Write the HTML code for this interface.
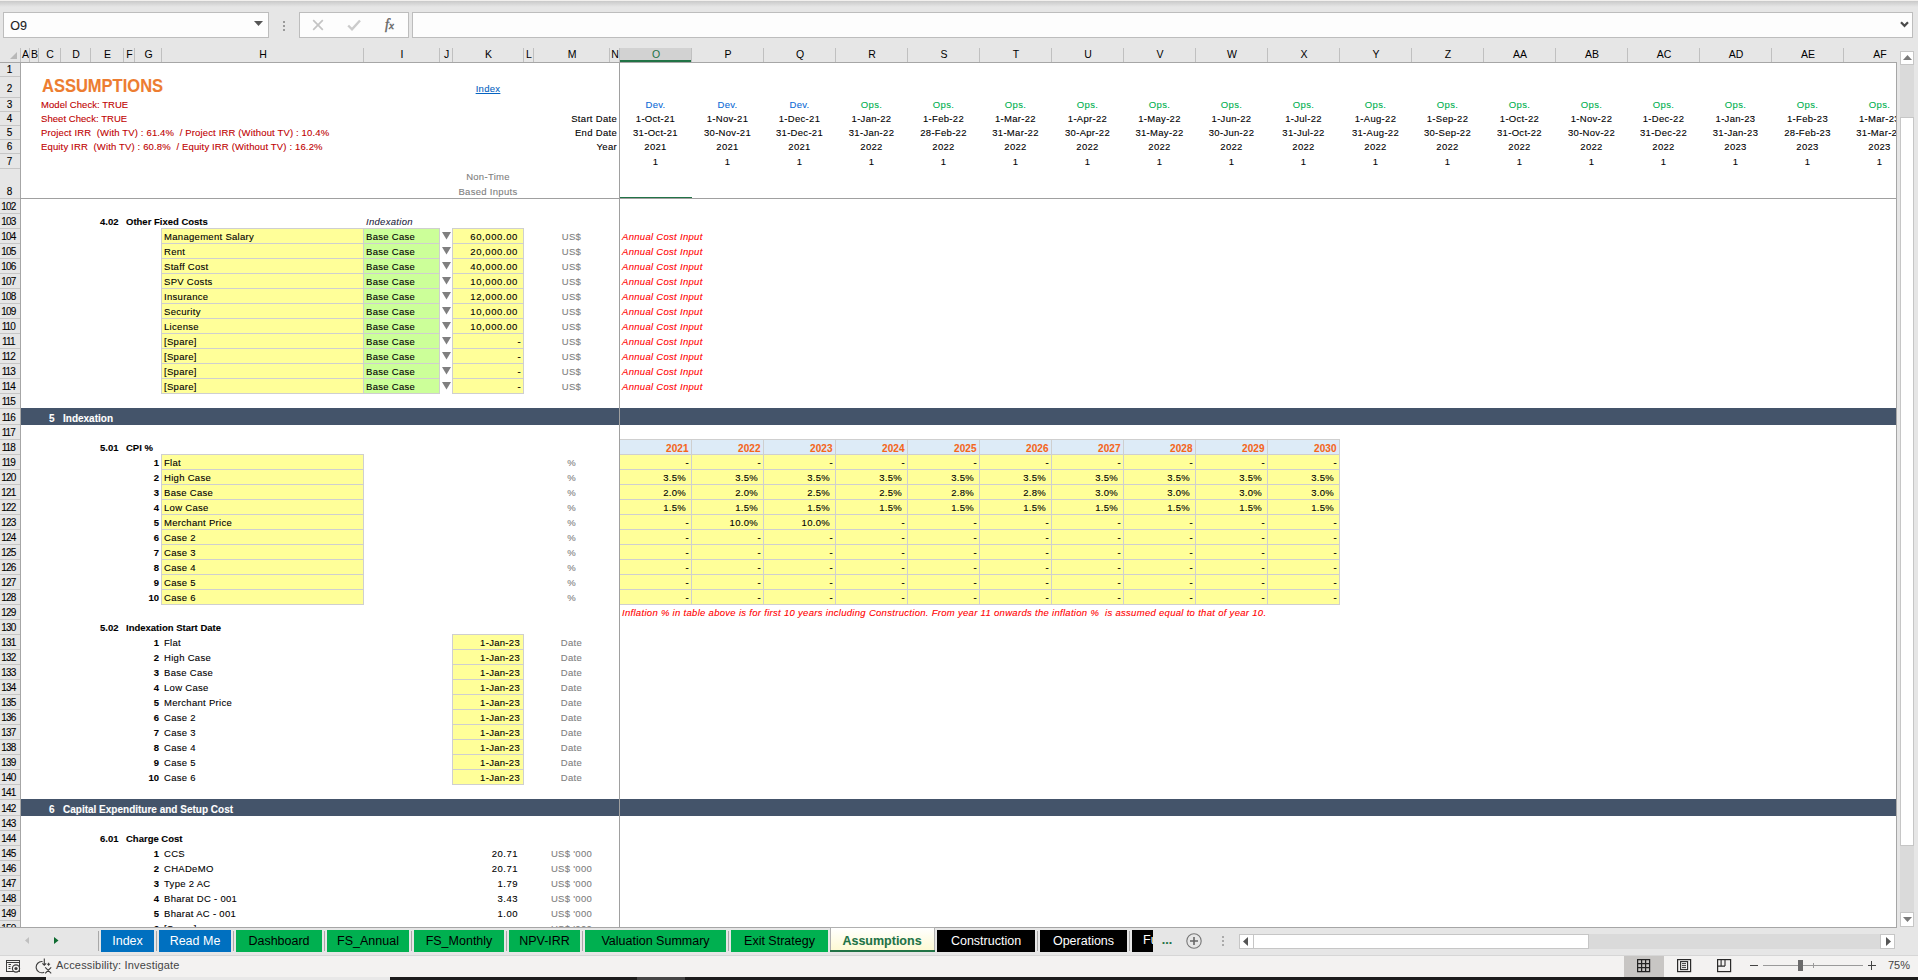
<!DOCTYPE html><html><head><meta charset="utf-8"><style>
html,body{margin:0;padding:0;}
body{width:1918px;height:980px;position:relative;overflow:hidden;background:#e6e6e6;font-family:"Liberation Sans", sans-serif;}
div{position:absolute;box-sizing:border-box;}
.t{white-space:pre;-webkit-text-stroke:0.1px currentColor;}
</style></head><body>
<div style="left:0px;top:0px;width:1918px;height:1px;background:#f2f0ee;"></div>
<div style="left:0;top:1px;width:1918px;height:6px;background:linear-gradient(#c9c9c9,#e6e6e6);"></div>
<div style="left:3px;top:12px;width:266px;height:26px;background:#fdfdfd;border:1px solid #bdbdbd;"></div>
<div class="t" style="top:18.69px;font-size:12.5px;line-height:14.36px;color:#222;font-weight:normal;left:10.3px;">O9</div>
<svg style="position:absolute;left:254px;top:21px" width="9" height="6"><path d="M0 0H9L4.5 5Z" fill="#555"/></svg>
<div style="left:283px;top:21px;width:2px;height:2px;background:#9a9a9a;"></div>
<div style="left:283px;top:25px;width:2px;height:2px;background:#9a9a9a;"></div>
<div style="left:283px;top:29px;width:2px;height:2px;background:#9a9a9a;"></div>
<div style="left:299px;top:12px;width:110px;height:26px;background:#fdfdfd;border:1px solid #bdbdbd;"></div>
<svg style="position:absolute;left:312px;top:19px" width="12" height="12"><path d="M1.2 1.2L10.8 10.8M10.8 1.2L1.2 10.8" stroke="#c4c4c4" stroke-width="1.7"/></svg>
<svg style="position:absolute;left:347px;top:19px" width="14" height="12"><path d="M1.2 6.5L5 10.3L13 1.5" stroke="#cbcbcb" stroke-width="2.4" fill="none"/></svg>
<div class="t" style="left:385px;top:17px;font-family:'Liberation Serif',serif;font-style:italic;font-weight:normal;font-size:14px;line-height:16px;color:#666;-webkit-text-stroke:0.4px #666;">f<span style="font-size:11px">x</span></div>
<div style="left:412px;top:12px;width:1501px;height:26px;background:#fdfdfd;border:1px solid #bdbdbd;"></div>
<svg style="position:absolute;left:1900px;top:21px" width="9" height="7"><path d="M1 1.2L4.5 4.8L8 1.2" stroke="#4a4a4a" stroke-width="2.2" fill="none"/></svg>
<div style="left:0px;top:48px;width:1918px;height:15px;background:#e6e6e6;"></div>
<div style="left:619px;top:48px;width:72px;height:14px;background:#d2d2d2;"></div>
<div style="left:619px;top:60px;width:72px;height:2px;background:#217346;"></div>
<div style="left:20px;top:48px;width:1px;height:14px;background:#c0c0c0;"></div>
<div class="t" style="top:48.30px;font-size:10.5px;line-height:12.06px;color:#000;font-weight:normal;left:-274.5px;width:600px;text-align:center;-webkit-text-stroke:0;">A</div>
<div style="left:29px;top:48px;width:1px;height:14px;background:#c0c0c0;"></div>
<div class="t" style="top:48.30px;font-size:10.5px;line-height:12.06px;color:#000;font-weight:normal;left:-265.5px;width:600px;text-align:center;-webkit-text-stroke:0;">B</div>
<div style="left:38px;top:48px;width:1px;height:14px;background:#c0c0c0;"></div>
<div class="t" style="top:48.30px;font-size:10.5px;line-height:12.06px;color:#000;font-weight:normal;left:-250.0px;width:600px;text-align:center;-webkit-text-stroke:0;">C</div>
<div style="left:60px;top:48px;width:1px;height:14px;background:#c0c0c0;"></div>
<div class="t" style="top:48.30px;font-size:10.5px;line-height:12.06px;color:#000;font-weight:normal;left:-224.0px;width:600px;text-align:center;-webkit-text-stroke:0;">D</div>
<div style="left:90px;top:48px;width:1px;height:14px;background:#c0c0c0;"></div>
<div class="t" style="top:48.30px;font-size:10.5px;line-height:12.06px;color:#000;font-weight:normal;left:-192.5px;width:600px;text-align:center;-webkit-text-stroke:0;">E</div>
<div style="left:123px;top:48px;width:1px;height:14px;background:#c0c0c0;"></div>
<div class="t" style="top:48.30px;font-size:10.5px;line-height:12.06px;color:#000;font-weight:normal;left:-170.5px;width:600px;text-align:center;-webkit-text-stroke:0;">F</div>
<div style="left:134px;top:48px;width:1px;height:14px;background:#c0c0c0;"></div>
<div class="t" style="top:48.30px;font-size:10.5px;line-height:12.06px;color:#000;font-weight:normal;left:-151.5px;width:600px;text-align:center;-webkit-text-stroke:0;">G</div>
<div style="left:161px;top:48px;width:1px;height:14px;background:#c0c0c0;"></div>
<div class="t" style="top:48.30px;font-size:10.5px;line-height:12.06px;color:#000;font-weight:normal;left:-37.0px;width:600px;text-align:center;-webkit-text-stroke:0;">H</div>
<div style="left:363px;top:48px;width:1px;height:14px;background:#c0c0c0;"></div>
<div class="t" style="top:48.30px;font-size:10.5px;line-height:12.06px;color:#000;font-weight:normal;left:102.0px;width:600px;text-align:center;-webkit-text-stroke:0;">I</div>
<div style="left:439px;top:48px;width:1px;height:14px;background:#c0c0c0;"></div>
<div class="t" style="top:48.30px;font-size:10.5px;line-height:12.06px;color:#000;font-weight:normal;left:146.5px;width:600px;text-align:center;-webkit-text-stroke:0;">J</div>
<div style="left:452px;top:48px;width:1px;height:14px;background:#c0c0c0;"></div>
<div class="t" style="top:48.30px;font-size:10.5px;line-height:12.06px;color:#000;font-weight:normal;left:188.5px;width:600px;text-align:center;-webkit-text-stroke:0;">K</div>
<div style="left:523px;top:48px;width:1px;height:14px;background:#c0c0c0;"></div>
<div class="t" style="top:48.30px;font-size:10.5px;line-height:12.06px;color:#000;font-weight:normal;left:229.0px;width:600px;text-align:center;-webkit-text-stroke:0;">L</div>
<div style="left:533px;top:48px;width:1px;height:14px;background:#c0c0c0;"></div>
<div class="t" style="top:48.30px;font-size:10.5px;line-height:12.06px;color:#000;font-weight:normal;left:272.0px;width:600px;text-align:center;-webkit-text-stroke:0;">M</div>
<div style="left:609px;top:48px;width:1px;height:14px;background:#c0c0c0;"></div>
<div class="t" style="top:48.30px;font-size:10.5px;line-height:12.06px;color:#000;font-weight:normal;left:315.0px;width:600px;text-align:center;-webkit-text-stroke:0;">N</div>
<div style="left:619px;top:48px;width:1px;height:14px;background:#c0c0c0;"></div>
<div class="t" style="top:48.30px;font-size:10.5px;line-height:12.06px;color:#217346;font-weight:normal;left:356.0px;width:600px;text-align:center;-webkit-text-stroke:0;">O</div>
<div style="left:691px;top:48px;width:1px;height:14px;background:#c0c0c0;"></div>
<div class="t" style="top:48.30px;font-size:10.5px;line-height:12.06px;color:#000;font-weight:normal;left:428.0px;width:600px;text-align:center;-webkit-text-stroke:0;">P</div>
<div style="left:763px;top:48px;width:1px;height:14px;background:#c0c0c0;"></div>
<div class="t" style="top:48.30px;font-size:10.5px;line-height:12.06px;color:#000;font-weight:normal;left:500.0px;width:600px;text-align:center;-webkit-text-stroke:0;">Q</div>
<div style="left:835px;top:48px;width:1px;height:14px;background:#c0c0c0;"></div>
<div class="t" style="top:48.30px;font-size:10.5px;line-height:12.06px;color:#000;font-weight:normal;left:572.0px;width:600px;text-align:center;-webkit-text-stroke:0;">R</div>
<div style="left:907px;top:48px;width:1px;height:14px;background:#c0c0c0;"></div>
<div class="t" style="top:48.30px;font-size:10.5px;line-height:12.06px;color:#000;font-weight:normal;left:644.0px;width:600px;text-align:center;-webkit-text-stroke:0;">S</div>
<div style="left:979px;top:48px;width:1px;height:14px;background:#c0c0c0;"></div>
<div class="t" style="top:48.30px;font-size:10.5px;line-height:12.06px;color:#000;font-weight:normal;left:716.0px;width:600px;text-align:center;-webkit-text-stroke:0;">T</div>
<div style="left:1051px;top:48px;width:1px;height:14px;background:#c0c0c0;"></div>
<div class="t" style="top:48.30px;font-size:10.5px;line-height:12.06px;color:#000;font-weight:normal;left:788.0px;width:600px;text-align:center;-webkit-text-stroke:0;">U</div>
<div style="left:1123px;top:48px;width:1px;height:14px;background:#c0c0c0;"></div>
<div class="t" style="top:48.30px;font-size:10.5px;line-height:12.06px;color:#000;font-weight:normal;left:860.0px;width:600px;text-align:center;-webkit-text-stroke:0;">V</div>
<div style="left:1195px;top:48px;width:1px;height:14px;background:#c0c0c0;"></div>
<div class="t" style="top:48.30px;font-size:10.5px;line-height:12.06px;color:#000;font-weight:normal;left:932.0px;width:600px;text-align:center;-webkit-text-stroke:0;">W</div>
<div style="left:1267px;top:48px;width:1px;height:14px;background:#c0c0c0;"></div>
<div class="t" style="top:48.30px;font-size:10.5px;line-height:12.06px;color:#000;font-weight:normal;left:1004.0px;width:600px;text-align:center;-webkit-text-stroke:0;">X</div>
<div style="left:1339px;top:48px;width:1px;height:14px;background:#c0c0c0;"></div>
<div class="t" style="top:48.30px;font-size:10.5px;line-height:12.06px;color:#000;font-weight:normal;left:1076.0px;width:600px;text-align:center;-webkit-text-stroke:0;">Y</div>
<div style="left:1411px;top:48px;width:1px;height:14px;background:#c0c0c0;"></div>
<div class="t" style="top:48.30px;font-size:10.5px;line-height:12.06px;color:#000;font-weight:normal;left:1148.0px;width:600px;text-align:center;-webkit-text-stroke:0;">Z</div>
<div style="left:1483px;top:48px;width:1px;height:14px;background:#c0c0c0;"></div>
<div class="t" style="top:48.30px;font-size:10.5px;line-height:12.06px;color:#000;font-weight:normal;left:1220.0px;width:600px;text-align:center;-webkit-text-stroke:0;">AA</div>
<div style="left:1555px;top:48px;width:1px;height:14px;background:#c0c0c0;"></div>
<div class="t" style="top:48.30px;font-size:10.5px;line-height:12.06px;color:#000;font-weight:normal;left:1292.0px;width:600px;text-align:center;-webkit-text-stroke:0;">AB</div>
<div style="left:1627px;top:48px;width:1px;height:14px;background:#c0c0c0;"></div>
<div class="t" style="top:48.30px;font-size:10.5px;line-height:12.06px;color:#000;font-weight:normal;left:1364.0px;width:600px;text-align:center;-webkit-text-stroke:0;">AC</div>
<div style="left:1699px;top:48px;width:1px;height:14px;background:#c0c0c0;"></div>
<div class="t" style="top:48.30px;font-size:10.5px;line-height:12.06px;color:#000;font-weight:normal;left:1436.0px;width:600px;text-align:center;-webkit-text-stroke:0;">AD</div>
<div style="left:1771px;top:48px;width:1px;height:14px;background:#c0c0c0;"></div>
<div class="t" style="top:48.30px;font-size:10.5px;line-height:12.06px;color:#000;font-weight:normal;left:1508.0px;width:600px;text-align:center;-webkit-text-stroke:0;">AE</div>
<div style="left:1843px;top:48px;width:1px;height:14px;background:#c0c0c0;"></div>
<div class="t" style="top:48.30px;font-size:10.5px;line-height:12.06px;color:#000;font-weight:normal;left:1580.0px;width:600px;text-align:center;-webkit-text-stroke:0;">AF</div>
<div style="left:0px;top:62px;width:1896px;height:1px;background:#a6a6a6;"></div>
<svg style="position:absolute;left:10px;top:52px" width="8" height="7"><path d="M7 0V7H0Z" fill="#b8b8b8"/></svg>
<div style="left:21px;top:63px;width:1875px;height:864px;background:#fff;"></div>
<div style="left:0px;top:63px;width:20px;height:864px;background:#e6e6e6;"></div>
<div style="left:20px;top:62px;width:1px;height:865px;background:#a6a6a6;"></div>
<div style="left:0px;top:76px;width:20px;height:1px;background:#c6c6c6;"></div>
<div class="t" style="top:63.65px;font-size:10px;line-height:11.49px;color:#000;font-weight:normal;left:-291.0px;width:600px;text-align:center;letter-spacing:-0.9px;">1</div>
<div style="left:0px;top:97px;width:20px;height:1px;background:#c6c6c6;"></div>
<div class="t" style="top:82.75px;font-size:10px;line-height:11.49px;color:#000;font-weight:normal;left:-291.0px;width:600px;text-align:center;letter-spacing:-0.9px;">2</div>
<div style="left:0px;top:111px;width:20px;height:1px;background:#c6c6c6;"></div>
<div class="t" style="top:98.65px;font-size:10px;line-height:11.49px;color:#000;font-weight:normal;left:-291.0px;width:600px;text-align:center;letter-spacing:-0.9px;">3</div>
<div style="left:0px;top:125px;width:20px;height:1px;background:#c6c6c6;"></div>
<div class="t" style="top:112.65px;font-size:10px;line-height:11.49px;color:#000;font-weight:normal;left:-291.0px;width:600px;text-align:center;letter-spacing:-0.9px;">4</div>
<div style="left:0px;top:139px;width:20px;height:1px;background:#c6c6c6;"></div>
<div class="t" style="top:126.65px;font-size:10px;line-height:11.49px;color:#000;font-weight:normal;left:-291.0px;width:600px;text-align:center;letter-spacing:-0.9px;">5</div>
<div style="left:0px;top:153px;width:20px;height:1px;background:#c6c6c6;"></div>
<div class="t" style="top:140.65px;font-size:10px;line-height:11.49px;color:#000;font-weight:normal;left:-291.0px;width:600px;text-align:center;letter-spacing:-0.9px;">6</div>
<div style="left:0px;top:168px;width:20px;height:1px;background:#c6c6c6;"></div>
<div class="t" style="top:155.65px;font-size:10px;line-height:11.49px;color:#000;font-weight:normal;left:-291.0px;width:600px;text-align:center;letter-spacing:-0.9px;">7</div>
<div style="left:0px;top:198px;width:20px;height:1px;background:#c6c6c6;"></div>
<div class="t" style="top:185.65px;font-size:10px;line-height:11.49px;color:#000;font-weight:normal;left:-291.0px;width:600px;text-align:center;letter-spacing:-0.9px;">8</div>
<div style="left:0px;top:213px;width:20px;height:1px;background:#c6c6c6;"></div>
<div class="t" style="top:200.65px;font-size:10px;line-height:11.49px;color:#000;font-weight:normal;left:-291.7px;width:600px;text-align:center;letter-spacing:-0.9px;">102</div>
<div style="left:0px;top:228px;width:20px;height:1px;background:#c6c6c6;"></div>
<div class="t" style="top:215.65px;font-size:10px;line-height:11.49px;color:#000;font-weight:normal;left:-291.7px;width:600px;text-align:center;letter-spacing:-0.9px;">103</div>
<div style="left:0px;top:243px;width:20px;height:1px;background:#c6c6c6;"></div>
<div class="t" style="top:230.65px;font-size:10px;line-height:11.49px;color:#000;font-weight:normal;left:-291.7px;width:600px;text-align:center;letter-spacing:-0.9px;">104</div>
<div style="left:0px;top:258px;width:20px;height:1px;background:#c6c6c6;"></div>
<div class="t" style="top:245.65px;font-size:10px;line-height:11.49px;color:#000;font-weight:normal;left:-291.7px;width:600px;text-align:center;letter-spacing:-0.9px;">105</div>
<div style="left:0px;top:273px;width:20px;height:1px;background:#c6c6c6;"></div>
<div class="t" style="top:260.65px;font-size:10px;line-height:11.49px;color:#000;font-weight:normal;left:-291.7px;width:600px;text-align:center;letter-spacing:-0.9px;">106</div>
<div style="left:0px;top:288px;width:20px;height:1px;background:#c6c6c6;"></div>
<div class="t" style="top:275.65px;font-size:10px;line-height:11.49px;color:#000;font-weight:normal;left:-291.7px;width:600px;text-align:center;letter-spacing:-0.9px;">107</div>
<div style="left:0px;top:303px;width:20px;height:1px;background:#c6c6c6;"></div>
<div class="t" style="top:290.65px;font-size:10px;line-height:11.49px;color:#000;font-weight:normal;left:-291.7px;width:600px;text-align:center;letter-spacing:-0.9px;">108</div>
<div style="left:0px;top:318px;width:20px;height:1px;background:#c6c6c6;"></div>
<div class="t" style="top:305.65px;font-size:10px;line-height:11.49px;color:#000;font-weight:normal;left:-291.7px;width:600px;text-align:center;letter-spacing:-0.9px;">109</div>
<div style="left:0px;top:333px;width:20px;height:1px;background:#c6c6c6;"></div>
<div class="t" style="top:320.65px;font-size:10px;line-height:11.49px;color:#000;font-weight:normal;left:-291.7px;width:600px;text-align:center;letter-spacing:-0.9px;">110</div>
<div style="left:0px;top:348px;width:20px;height:1px;background:#c6c6c6;"></div>
<div class="t" style="top:335.65px;font-size:10px;line-height:11.49px;color:#000;font-weight:normal;left:-291.7px;width:600px;text-align:center;letter-spacing:-0.9px;">111</div>
<div style="left:0px;top:363px;width:20px;height:1px;background:#c6c6c6;"></div>
<div class="t" style="top:350.65px;font-size:10px;line-height:11.49px;color:#000;font-weight:normal;left:-291.7px;width:600px;text-align:center;letter-spacing:-0.9px;">112</div>
<div style="left:0px;top:378px;width:20px;height:1px;background:#c6c6c6;"></div>
<div class="t" style="top:365.65px;font-size:10px;line-height:11.49px;color:#000;font-weight:normal;left:-291.7px;width:600px;text-align:center;letter-spacing:-0.9px;">113</div>
<div style="left:0px;top:393px;width:20px;height:1px;background:#c6c6c6;"></div>
<div class="t" style="top:380.65px;font-size:10px;line-height:11.49px;color:#000;font-weight:normal;left:-291.7px;width:600px;text-align:center;letter-spacing:-0.9px;">114</div>
<div style="left:0px;top:408px;width:20px;height:1px;background:#c6c6c6;"></div>
<div class="t" style="top:395.65px;font-size:10px;line-height:11.49px;color:#000;font-weight:normal;left:-291.7px;width:600px;text-align:center;letter-spacing:-0.9px;">115</div>
<div style="left:0px;top:424px;width:20px;height:1px;background:#c6c6c6;"></div>
<div class="t" style="top:411.65px;font-size:10px;line-height:11.49px;color:#000;font-weight:normal;left:-291.7px;width:600px;text-align:center;letter-spacing:-0.9px;">116</div>
<div style="left:0px;top:439px;width:20px;height:1px;background:#c6c6c6;"></div>
<div class="t" style="top:426.65px;font-size:10px;line-height:11.49px;color:#000;font-weight:normal;left:-291.7px;width:600px;text-align:center;letter-spacing:-0.9px;">117</div>
<div style="left:0px;top:454px;width:20px;height:1px;background:#c6c6c6;"></div>
<div class="t" style="top:441.65px;font-size:10px;line-height:11.49px;color:#000;font-weight:normal;left:-291.7px;width:600px;text-align:center;letter-spacing:-0.9px;">118</div>
<div style="left:0px;top:469px;width:20px;height:1px;background:#c6c6c6;"></div>
<div class="t" style="top:456.65px;font-size:10px;line-height:11.49px;color:#000;font-weight:normal;left:-291.7px;width:600px;text-align:center;letter-spacing:-0.9px;">119</div>
<div style="left:0px;top:484px;width:20px;height:1px;background:#c6c6c6;"></div>
<div class="t" style="top:471.65px;font-size:10px;line-height:11.49px;color:#000;font-weight:normal;left:-291.7px;width:600px;text-align:center;letter-spacing:-0.9px;">120</div>
<div style="left:0px;top:499px;width:20px;height:1px;background:#c6c6c6;"></div>
<div class="t" style="top:486.65px;font-size:10px;line-height:11.49px;color:#000;font-weight:normal;left:-291.7px;width:600px;text-align:center;letter-spacing:-0.9px;">121</div>
<div style="left:0px;top:514px;width:20px;height:1px;background:#c6c6c6;"></div>
<div class="t" style="top:501.65px;font-size:10px;line-height:11.49px;color:#000;font-weight:normal;left:-291.7px;width:600px;text-align:center;letter-spacing:-0.9px;">122</div>
<div style="left:0px;top:529px;width:20px;height:1px;background:#c6c6c6;"></div>
<div class="t" style="top:516.65px;font-size:10px;line-height:11.49px;color:#000;font-weight:normal;left:-291.7px;width:600px;text-align:center;letter-spacing:-0.9px;">123</div>
<div style="left:0px;top:544px;width:20px;height:1px;background:#c6c6c6;"></div>
<div class="t" style="top:531.65px;font-size:10px;line-height:11.49px;color:#000;font-weight:normal;left:-291.7px;width:600px;text-align:center;letter-spacing:-0.9px;">124</div>
<div style="left:0px;top:559px;width:20px;height:1px;background:#c6c6c6;"></div>
<div class="t" style="top:546.65px;font-size:10px;line-height:11.49px;color:#000;font-weight:normal;left:-291.7px;width:600px;text-align:center;letter-spacing:-0.9px;">125</div>
<div style="left:0px;top:574px;width:20px;height:1px;background:#c6c6c6;"></div>
<div class="t" style="top:561.65px;font-size:10px;line-height:11.49px;color:#000;font-weight:normal;left:-291.7px;width:600px;text-align:center;letter-spacing:-0.9px;">126</div>
<div style="left:0px;top:589px;width:20px;height:1px;background:#c6c6c6;"></div>
<div class="t" style="top:576.65px;font-size:10px;line-height:11.49px;color:#000;font-weight:normal;left:-291.7px;width:600px;text-align:center;letter-spacing:-0.9px;">127</div>
<div style="left:0px;top:604px;width:20px;height:1px;background:#c6c6c6;"></div>
<div class="t" style="top:591.65px;font-size:10px;line-height:11.49px;color:#000;font-weight:normal;left:-291.7px;width:600px;text-align:center;letter-spacing:-0.9px;">128</div>
<div style="left:0px;top:619px;width:20px;height:1px;background:#c6c6c6;"></div>
<div class="t" style="top:606.65px;font-size:10px;line-height:11.49px;color:#000;font-weight:normal;left:-291.7px;width:600px;text-align:center;letter-spacing:-0.9px;">129</div>
<div style="left:0px;top:634px;width:20px;height:1px;background:#c6c6c6;"></div>
<div class="t" style="top:621.65px;font-size:10px;line-height:11.49px;color:#000;font-weight:normal;left:-291.7px;width:600px;text-align:center;letter-spacing:-0.9px;">130</div>
<div style="left:0px;top:649px;width:20px;height:1px;background:#c6c6c6;"></div>
<div class="t" style="top:636.65px;font-size:10px;line-height:11.49px;color:#000;font-weight:normal;left:-291.7px;width:600px;text-align:center;letter-spacing:-0.9px;">131</div>
<div style="left:0px;top:664px;width:20px;height:1px;background:#c6c6c6;"></div>
<div class="t" style="top:651.65px;font-size:10px;line-height:11.49px;color:#000;font-weight:normal;left:-291.7px;width:600px;text-align:center;letter-spacing:-0.9px;">132</div>
<div style="left:0px;top:679px;width:20px;height:1px;background:#c6c6c6;"></div>
<div class="t" style="top:666.65px;font-size:10px;line-height:11.49px;color:#000;font-weight:normal;left:-291.7px;width:600px;text-align:center;letter-spacing:-0.9px;">133</div>
<div style="left:0px;top:694px;width:20px;height:1px;background:#c6c6c6;"></div>
<div class="t" style="top:681.65px;font-size:10px;line-height:11.49px;color:#000;font-weight:normal;left:-291.7px;width:600px;text-align:center;letter-spacing:-0.9px;">134</div>
<div style="left:0px;top:709px;width:20px;height:1px;background:#c6c6c6;"></div>
<div class="t" style="top:696.65px;font-size:10px;line-height:11.49px;color:#000;font-weight:normal;left:-291.7px;width:600px;text-align:center;letter-spacing:-0.9px;">135</div>
<div style="left:0px;top:724px;width:20px;height:1px;background:#c6c6c6;"></div>
<div class="t" style="top:711.65px;font-size:10px;line-height:11.49px;color:#000;font-weight:normal;left:-291.7px;width:600px;text-align:center;letter-spacing:-0.9px;">136</div>
<div style="left:0px;top:739px;width:20px;height:1px;background:#c6c6c6;"></div>
<div class="t" style="top:726.65px;font-size:10px;line-height:11.49px;color:#000;font-weight:normal;left:-291.7px;width:600px;text-align:center;letter-spacing:-0.9px;">137</div>
<div style="left:0px;top:754px;width:20px;height:1px;background:#c6c6c6;"></div>
<div class="t" style="top:741.65px;font-size:10px;line-height:11.49px;color:#000;font-weight:normal;left:-291.7px;width:600px;text-align:center;letter-spacing:-0.9px;">138</div>
<div style="left:0px;top:769px;width:20px;height:1px;background:#c6c6c6;"></div>
<div class="t" style="top:756.65px;font-size:10px;line-height:11.49px;color:#000;font-weight:normal;left:-291.7px;width:600px;text-align:center;letter-spacing:-0.9px;">139</div>
<div style="left:0px;top:784px;width:20px;height:1px;background:#c6c6c6;"></div>
<div class="t" style="top:771.65px;font-size:10px;line-height:11.49px;color:#000;font-weight:normal;left:-291.7px;width:600px;text-align:center;letter-spacing:-0.9px;">140</div>
<div style="left:0px;top:799px;width:20px;height:1px;background:#c6c6c6;"></div>
<div class="t" style="top:786.65px;font-size:10px;line-height:11.49px;color:#000;font-weight:normal;left:-291.7px;width:600px;text-align:center;letter-spacing:-0.9px;">141</div>
<div style="left:0px;top:815px;width:20px;height:1px;background:#c6c6c6;"></div>
<div class="t" style="top:802.65px;font-size:10px;line-height:11.49px;color:#000;font-weight:normal;left:-291.7px;width:600px;text-align:center;letter-spacing:-0.9px;">142</div>
<div style="left:0px;top:830px;width:20px;height:1px;background:#c6c6c6;"></div>
<div class="t" style="top:817.65px;font-size:10px;line-height:11.49px;color:#000;font-weight:normal;left:-291.7px;width:600px;text-align:center;letter-spacing:-0.9px;">143</div>
<div style="left:0px;top:845px;width:20px;height:1px;background:#c6c6c6;"></div>
<div class="t" style="top:832.65px;font-size:10px;line-height:11.49px;color:#000;font-weight:normal;left:-291.7px;width:600px;text-align:center;letter-spacing:-0.9px;">144</div>
<div style="left:0px;top:860px;width:20px;height:1px;background:#c6c6c6;"></div>
<div class="t" style="top:847.65px;font-size:10px;line-height:11.49px;color:#000;font-weight:normal;left:-291.7px;width:600px;text-align:center;letter-spacing:-0.9px;">145</div>
<div style="left:0px;top:875px;width:20px;height:1px;background:#c6c6c6;"></div>
<div class="t" style="top:862.65px;font-size:10px;line-height:11.49px;color:#000;font-weight:normal;left:-291.7px;width:600px;text-align:center;letter-spacing:-0.9px;">146</div>
<div style="left:0px;top:890px;width:20px;height:1px;background:#c6c6c6;"></div>
<div class="t" style="top:877.65px;font-size:10px;line-height:11.49px;color:#000;font-weight:normal;left:-291.7px;width:600px;text-align:center;letter-spacing:-0.9px;">147</div>
<div style="left:0px;top:905px;width:20px;height:1px;background:#c6c6c6;"></div>
<div class="t" style="top:892.65px;font-size:10px;line-height:11.49px;color:#000;font-weight:normal;left:-291.7px;width:600px;text-align:center;letter-spacing:-0.9px;">148</div>
<div style="left:0px;top:920px;width:20px;height:1px;background:#c6c6c6;"></div>
<div class="t" style="top:907.65px;font-size:10px;line-height:11.49px;color:#000;font-weight:normal;left:-291.7px;width:600px;text-align:center;letter-spacing:-0.9px;">149</div>
<div class="t" style="top:922.65px;font-size:10px;line-height:11.49px;color:#000;font-weight:normal;left:-291.7px;width:600px;text-align:center;letter-spacing:-0.9px;">150</div>
<div style="left:0px;top:927px;width:1897px;height:1px;background:#a6a6a6;"></div>
<div style="left:1896px;top:62px;width:1px;height:866px;background:#a6a6a6;"></div>
<div class="t" style="top:75.71px;font-size:18px;line-height:20.68px;color:#ed7d31;font-weight:bold;left:42px;transform:scaleX(0.917);transform-origin:0 0;">ASSUMPTIONS</div>
<div class="t" style="top:100.20px;font-size:9.5px;line-height:10.92px;color:#c00000;font-weight:normal;letter-spacing:0.05px;left:41px;">Model Check: TRUE</div>
<div class="t" style="top:114.20px;font-size:9.5px;line-height:10.92px;color:#c00000;font-weight:normal;letter-spacing:0.05px;left:41px;">Sheet Check: TRUE</div>
<div class="t" style="top:128.20px;font-size:9.5px;line-height:10.92px;color:#c00000;font-weight:normal;letter-spacing:0.15px;left:41px;">Project IRR  (With TV) : 61.4%  / Project IRR (Without TV) : 10.4%</div>
<div class="t" style="top:142.20px;font-size:9.5px;line-height:10.92px;color:#c00000;font-weight:normal;letter-spacing:0.15px;left:41px;">Equity IRR  (With TV) : 60.8%  / Equity IRR (Without TV) : 16.2%</div>
<div class="t" style="top:83.90px;font-size:9.5px;line-height:10.92px;color:#0563c1;font-weight:normal;letter-spacing:0.3px;left:188.0px;width:600px;text-align:center;text-decoration:underline;">Index</div>
<div class="t" style="top:114.20px;font-size:9.5px;line-height:10.92px;color:#000;font-weight:normal;letter-spacing:0.3px;right:1301px;text-align:right;">Start Date</div>
<div class="t" style="top:128.20px;font-size:9.5px;line-height:10.92px;color:#000;font-weight:normal;letter-spacing:0.3px;right:1301px;text-align:right;">End Date</div>
<div class="t" style="top:142.20px;font-size:9.5px;line-height:10.92px;color:#000;font-weight:normal;letter-spacing:0.3px;right:1301px;text-align:right;">Year</div>
<div class="t" style="top:172.40px;font-size:9.5px;line-height:10.92px;color:#808080;font-weight:normal;letter-spacing:0.3px;left:188.0px;width:600px;text-align:center;">Non-Time</div>
<div class="t" style="top:187.40px;font-size:9.5px;line-height:10.92px;color:#808080;font-weight:normal;letter-spacing:0.3px;left:188.0px;width:600px;text-align:center;">Based Inputs</div>
<div class="t" style="top:100.20px;font-size:9.5px;line-height:10.92px;color:#0a6ad6;font-weight:normal;letter-spacing:0.3px;left:355.5px;width:600px;text-align:center;">Dev.</div>
<div class="t" style="top:114.20px;font-size:9.5px;line-height:10.92px;color:#000;font-weight:normal;letter-spacing:0.3px;left:355.5px;width:600px;text-align:center;">1-Oct-21</div>
<div class="t" style="top:128.20px;font-size:9.5px;line-height:10.92px;color:#000;font-weight:normal;letter-spacing:0.3px;left:355.5px;width:600px;text-align:center;">31-Oct-21</div>
<div class="t" style="top:142.20px;font-size:9.5px;line-height:10.92px;color:#000;font-weight:normal;letter-spacing:0.3px;left:355.5px;width:600px;text-align:center;">2021</div>
<div class="t" style="top:157.20px;font-size:9.5px;line-height:10.92px;color:#000;font-weight:normal;letter-spacing:0.3px;left:355.5px;width:600px;text-align:center;">1</div>
<div class="t" style="top:100.20px;font-size:9.5px;line-height:10.92px;color:#0a6ad6;font-weight:normal;letter-spacing:0.3px;left:427.5px;width:600px;text-align:center;">Dev.</div>
<div class="t" style="top:114.20px;font-size:9.5px;line-height:10.92px;color:#000;font-weight:normal;letter-spacing:0.3px;left:427.5px;width:600px;text-align:center;">1-Nov-21</div>
<div class="t" style="top:128.20px;font-size:9.5px;line-height:10.92px;color:#000;font-weight:normal;letter-spacing:0.3px;left:427.5px;width:600px;text-align:center;">30-Nov-21</div>
<div class="t" style="top:142.20px;font-size:9.5px;line-height:10.92px;color:#000;font-weight:normal;letter-spacing:0.3px;left:427.5px;width:600px;text-align:center;">2021</div>
<div class="t" style="top:157.20px;font-size:9.5px;line-height:10.92px;color:#000;font-weight:normal;letter-spacing:0.3px;left:427.5px;width:600px;text-align:center;">1</div>
<div class="t" style="top:100.20px;font-size:9.5px;line-height:10.92px;color:#0a6ad6;font-weight:normal;letter-spacing:0.3px;left:499.5px;width:600px;text-align:center;">Dev.</div>
<div class="t" style="top:114.20px;font-size:9.5px;line-height:10.92px;color:#000;font-weight:normal;letter-spacing:0.3px;left:499.5px;width:600px;text-align:center;">1-Dec-21</div>
<div class="t" style="top:128.20px;font-size:9.5px;line-height:10.92px;color:#000;font-weight:normal;letter-spacing:0.3px;left:499.5px;width:600px;text-align:center;">31-Dec-21</div>
<div class="t" style="top:142.20px;font-size:9.5px;line-height:10.92px;color:#000;font-weight:normal;letter-spacing:0.3px;left:499.5px;width:600px;text-align:center;">2021</div>
<div class="t" style="top:157.20px;font-size:9.5px;line-height:10.92px;color:#000;font-weight:normal;letter-spacing:0.3px;left:499.5px;width:600px;text-align:center;">1</div>
<div class="t" style="top:100.20px;font-size:9.5px;line-height:10.92px;color:#00b050;font-weight:normal;letter-spacing:0.3px;left:571.5px;width:600px;text-align:center;">Ops.</div>
<div class="t" style="top:114.20px;font-size:9.5px;line-height:10.92px;color:#000;font-weight:normal;letter-spacing:0.3px;left:571.5px;width:600px;text-align:center;">1-Jan-22</div>
<div class="t" style="top:128.20px;font-size:9.5px;line-height:10.92px;color:#000;font-weight:normal;letter-spacing:0.3px;left:571.5px;width:600px;text-align:center;">31-Jan-22</div>
<div class="t" style="top:142.20px;font-size:9.5px;line-height:10.92px;color:#000;font-weight:normal;letter-spacing:0.3px;left:571.5px;width:600px;text-align:center;">2022</div>
<div class="t" style="top:157.20px;font-size:9.5px;line-height:10.92px;color:#000;font-weight:normal;letter-spacing:0.3px;left:571.5px;width:600px;text-align:center;">1</div>
<div class="t" style="top:100.20px;font-size:9.5px;line-height:10.92px;color:#00b050;font-weight:normal;letter-spacing:0.3px;left:643.5px;width:600px;text-align:center;">Ops.</div>
<div class="t" style="top:114.20px;font-size:9.5px;line-height:10.92px;color:#000;font-weight:normal;letter-spacing:0.3px;left:643.5px;width:600px;text-align:center;">1-Feb-22</div>
<div class="t" style="top:128.20px;font-size:9.5px;line-height:10.92px;color:#000;font-weight:normal;letter-spacing:0.3px;left:643.5px;width:600px;text-align:center;">28-Feb-22</div>
<div class="t" style="top:142.20px;font-size:9.5px;line-height:10.92px;color:#000;font-weight:normal;letter-spacing:0.3px;left:643.5px;width:600px;text-align:center;">2022</div>
<div class="t" style="top:157.20px;font-size:9.5px;line-height:10.92px;color:#000;font-weight:normal;letter-spacing:0.3px;left:643.5px;width:600px;text-align:center;">1</div>
<div class="t" style="top:100.20px;font-size:9.5px;line-height:10.92px;color:#00b050;font-weight:normal;letter-spacing:0.3px;left:715.5px;width:600px;text-align:center;">Ops.</div>
<div class="t" style="top:114.20px;font-size:9.5px;line-height:10.92px;color:#000;font-weight:normal;letter-spacing:0.3px;left:715.5px;width:600px;text-align:center;">1-Mar-22</div>
<div class="t" style="top:128.20px;font-size:9.5px;line-height:10.92px;color:#000;font-weight:normal;letter-spacing:0.3px;left:715.5px;width:600px;text-align:center;">31-Mar-22</div>
<div class="t" style="top:142.20px;font-size:9.5px;line-height:10.92px;color:#000;font-weight:normal;letter-spacing:0.3px;left:715.5px;width:600px;text-align:center;">2022</div>
<div class="t" style="top:157.20px;font-size:9.5px;line-height:10.92px;color:#000;font-weight:normal;letter-spacing:0.3px;left:715.5px;width:600px;text-align:center;">1</div>
<div class="t" style="top:100.20px;font-size:9.5px;line-height:10.92px;color:#00b050;font-weight:normal;letter-spacing:0.3px;left:787.5px;width:600px;text-align:center;">Ops.</div>
<div class="t" style="top:114.20px;font-size:9.5px;line-height:10.92px;color:#000;font-weight:normal;letter-spacing:0.3px;left:787.5px;width:600px;text-align:center;">1-Apr-22</div>
<div class="t" style="top:128.20px;font-size:9.5px;line-height:10.92px;color:#000;font-weight:normal;letter-spacing:0.3px;left:787.5px;width:600px;text-align:center;">30-Apr-22</div>
<div class="t" style="top:142.20px;font-size:9.5px;line-height:10.92px;color:#000;font-weight:normal;letter-spacing:0.3px;left:787.5px;width:600px;text-align:center;">2022</div>
<div class="t" style="top:157.20px;font-size:9.5px;line-height:10.92px;color:#000;font-weight:normal;letter-spacing:0.3px;left:787.5px;width:600px;text-align:center;">1</div>
<div class="t" style="top:100.20px;font-size:9.5px;line-height:10.92px;color:#00b050;font-weight:normal;letter-spacing:0.3px;left:859.5px;width:600px;text-align:center;">Ops.</div>
<div class="t" style="top:114.20px;font-size:9.5px;line-height:10.92px;color:#000;font-weight:normal;letter-spacing:0.3px;left:859.5px;width:600px;text-align:center;">1-May-22</div>
<div class="t" style="top:128.20px;font-size:9.5px;line-height:10.92px;color:#000;font-weight:normal;letter-spacing:0.3px;left:859.5px;width:600px;text-align:center;">31-May-22</div>
<div class="t" style="top:142.20px;font-size:9.5px;line-height:10.92px;color:#000;font-weight:normal;letter-spacing:0.3px;left:859.5px;width:600px;text-align:center;">2022</div>
<div class="t" style="top:157.20px;font-size:9.5px;line-height:10.92px;color:#000;font-weight:normal;letter-spacing:0.3px;left:859.5px;width:600px;text-align:center;">1</div>
<div class="t" style="top:100.20px;font-size:9.5px;line-height:10.92px;color:#00b050;font-weight:normal;letter-spacing:0.3px;left:931.5px;width:600px;text-align:center;">Ops.</div>
<div class="t" style="top:114.20px;font-size:9.5px;line-height:10.92px;color:#000;font-weight:normal;letter-spacing:0.3px;left:931.5px;width:600px;text-align:center;">1-Jun-22</div>
<div class="t" style="top:128.20px;font-size:9.5px;line-height:10.92px;color:#000;font-weight:normal;letter-spacing:0.3px;left:931.5px;width:600px;text-align:center;">30-Jun-22</div>
<div class="t" style="top:142.20px;font-size:9.5px;line-height:10.92px;color:#000;font-weight:normal;letter-spacing:0.3px;left:931.5px;width:600px;text-align:center;">2022</div>
<div class="t" style="top:157.20px;font-size:9.5px;line-height:10.92px;color:#000;font-weight:normal;letter-spacing:0.3px;left:931.5px;width:600px;text-align:center;">1</div>
<div class="t" style="top:100.20px;font-size:9.5px;line-height:10.92px;color:#00b050;font-weight:normal;letter-spacing:0.3px;left:1003.5px;width:600px;text-align:center;">Ops.</div>
<div class="t" style="top:114.20px;font-size:9.5px;line-height:10.92px;color:#000;font-weight:normal;letter-spacing:0.3px;left:1003.5px;width:600px;text-align:center;">1-Jul-22</div>
<div class="t" style="top:128.20px;font-size:9.5px;line-height:10.92px;color:#000;font-weight:normal;letter-spacing:0.3px;left:1003.5px;width:600px;text-align:center;">31-Jul-22</div>
<div class="t" style="top:142.20px;font-size:9.5px;line-height:10.92px;color:#000;font-weight:normal;letter-spacing:0.3px;left:1003.5px;width:600px;text-align:center;">2022</div>
<div class="t" style="top:157.20px;font-size:9.5px;line-height:10.92px;color:#000;font-weight:normal;letter-spacing:0.3px;left:1003.5px;width:600px;text-align:center;">1</div>
<div class="t" style="top:100.20px;font-size:9.5px;line-height:10.92px;color:#00b050;font-weight:normal;letter-spacing:0.3px;left:1075.5px;width:600px;text-align:center;">Ops.</div>
<div class="t" style="top:114.20px;font-size:9.5px;line-height:10.92px;color:#000;font-weight:normal;letter-spacing:0.3px;left:1075.5px;width:600px;text-align:center;">1-Aug-22</div>
<div class="t" style="top:128.20px;font-size:9.5px;line-height:10.92px;color:#000;font-weight:normal;letter-spacing:0.3px;left:1075.5px;width:600px;text-align:center;">31-Aug-22</div>
<div class="t" style="top:142.20px;font-size:9.5px;line-height:10.92px;color:#000;font-weight:normal;letter-spacing:0.3px;left:1075.5px;width:600px;text-align:center;">2022</div>
<div class="t" style="top:157.20px;font-size:9.5px;line-height:10.92px;color:#000;font-weight:normal;letter-spacing:0.3px;left:1075.5px;width:600px;text-align:center;">1</div>
<div class="t" style="top:100.20px;font-size:9.5px;line-height:10.92px;color:#00b050;font-weight:normal;letter-spacing:0.3px;left:1147.5px;width:600px;text-align:center;">Ops.</div>
<div class="t" style="top:114.20px;font-size:9.5px;line-height:10.92px;color:#000;font-weight:normal;letter-spacing:0.3px;left:1147.5px;width:600px;text-align:center;">1-Sep-22</div>
<div class="t" style="top:128.20px;font-size:9.5px;line-height:10.92px;color:#000;font-weight:normal;letter-spacing:0.3px;left:1147.5px;width:600px;text-align:center;">30-Sep-22</div>
<div class="t" style="top:142.20px;font-size:9.5px;line-height:10.92px;color:#000;font-weight:normal;letter-spacing:0.3px;left:1147.5px;width:600px;text-align:center;">2022</div>
<div class="t" style="top:157.20px;font-size:9.5px;line-height:10.92px;color:#000;font-weight:normal;letter-spacing:0.3px;left:1147.5px;width:600px;text-align:center;">1</div>
<div class="t" style="top:100.20px;font-size:9.5px;line-height:10.92px;color:#00b050;font-weight:normal;letter-spacing:0.3px;left:1219.5px;width:600px;text-align:center;">Ops.</div>
<div class="t" style="top:114.20px;font-size:9.5px;line-height:10.92px;color:#000;font-weight:normal;letter-spacing:0.3px;left:1219.5px;width:600px;text-align:center;">1-Oct-22</div>
<div class="t" style="top:128.20px;font-size:9.5px;line-height:10.92px;color:#000;font-weight:normal;letter-spacing:0.3px;left:1219.5px;width:600px;text-align:center;">31-Oct-22</div>
<div class="t" style="top:142.20px;font-size:9.5px;line-height:10.92px;color:#000;font-weight:normal;letter-spacing:0.3px;left:1219.5px;width:600px;text-align:center;">2022</div>
<div class="t" style="top:157.20px;font-size:9.5px;line-height:10.92px;color:#000;font-weight:normal;letter-spacing:0.3px;left:1219.5px;width:600px;text-align:center;">1</div>
<div class="t" style="top:100.20px;font-size:9.5px;line-height:10.92px;color:#00b050;font-weight:normal;letter-spacing:0.3px;left:1291.5px;width:600px;text-align:center;">Ops.</div>
<div class="t" style="top:114.20px;font-size:9.5px;line-height:10.92px;color:#000;font-weight:normal;letter-spacing:0.3px;left:1291.5px;width:600px;text-align:center;">1-Nov-22</div>
<div class="t" style="top:128.20px;font-size:9.5px;line-height:10.92px;color:#000;font-weight:normal;letter-spacing:0.3px;left:1291.5px;width:600px;text-align:center;">30-Nov-22</div>
<div class="t" style="top:142.20px;font-size:9.5px;line-height:10.92px;color:#000;font-weight:normal;letter-spacing:0.3px;left:1291.5px;width:600px;text-align:center;">2022</div>
<div class="t" style="top:157.20px;font-size:9.5px;line-height:10.92px;color:#000;font-weight:normal;letter-spacing:0.3px;left:1291.5px;width:600px;text-align:center;">1</div>
<div class="t" style="top:100.20px;font-size:9.5px;line-height:10.92px;color:#00b050;font-weight:normal;letter-spacing:0.3px;left:1363.5px;width:600px;text-align:center;">Ops.</div>
<div class="t" style="top:114.20px;font-size:9.5px;line-height:10.92px;color:#000;font-weight:normal;letter-spacing:0.3px;left:1363.5px;width:600px;text-align:center;">1-Dec-22</div>
<div class="t" style="top:128.20px;font-size:9.5px;line-height:10.92px;color:#000;font-weight:normal;letter-spacing:0.3px;left:1363.5px;width:600px;text-align:center;">31-Dec-22</div>
<div class="t" style="top:142.20px;font-size:9.5px;line-height:10.92px;color:#000;font-weight:normal;letter-spacing:0.3px;left:1363.5px;width:600px;text-align:center;">2022</div>
<div class="t" style="top:157.20px;font-size:9.5px;line-height:10.92px;color:#000;font-weight:normal;letter-spacing:0.3px;left:1363.5px;width:600px;text-align:center;">1</div>
<div class="t" style="top:100.20px;font-size:9.5px;line-height:10.92px;color:#00b050;font-weight:normal;letter-spacing:0.3px;left:1435.5px;width:600px;text-align:center;">Ops.</div>
<div class="t" style="top:114.20px;font-size:9.5px;line-height:10.92px;color:#000;font-weight:normal;letter-spacing:0.3px;left:1435.5px;width:600px;text-align:center;">1-Jan-23</div>
<div class="t" style="top:128.20px;font-size:9.5px;line-height:10.92px;color:#000;font-weight:normal;letter-spacing:0.3px;left:1435.5px;width:600px;text-align:center;">31-Jan-23</div>
<div class="t" style="top:142.20px;font-size:9.5px;line-height:10.92px;color:#000;font-weight:normal;letter-spacing:0.3px;left:1435.5px;width:600px;text-align:center;">2023</div>
<div class="t" style="top:157.20px;font-size:9.5px;line-height:10.92px;color:#000;font-weight:normal;letter-spacing:0.3px;left:1435.5px;width:600px;text-align:center;">1</div>
<div class="t" style="top:100.20px;font-size:9.5px;line-height:10.92px;color:#00b050;font-weight:normal;letter-spacing:0.3px;left:1507.5px;width:600px;text-align:center;">Ops.</div>
<div class="t" style="top:114.20px;font-size:9.5px;line-height:10.92px;color:#000;font-weight:normal;letter-spacing:0.3px;left:1507.5px;width:600px;text-align:center;">1-Feb-23</div>
<div class="t" style="top:128.20px;font-size:9.5px;line-height:10.92px;color:#000;font-weight:normal;letter-spacing:0.3px;left:1507.5px;width:600px;text-align:center;">28-Feb-23</div>
<div class="t" style="top:142.20px;font-size:9.5px;line-height:10.92px;color:#000;font-weight:normal;letter-spacing:0.3px;left:1507.5px;width:600px;text-align:center;">2023</div>
<div class="t" style="top:157.20px;font-size:9.5px;line-height:10.92px;color:#000;font-weight:normal;letter-spacing:0.3px;left:1507.5px;width:600px;text-align:center;">1</div>
<div class="t" style="top:100.20px;font-size:9.5px;line-height:10.92px;color:#00b050;font-weight:normal;letter-spacing:0.3px;left:1579.5px;width:600px;text-align:center;">Ops.</div>
<div class="t" style="top:114.20px;font-size:9.5px;line-height:10.92px;color:#000;font-weight:normal;letter-spacing:0.3px;left:1579.5px;width:600px;text-align:center;">1-Mar-23</div>
<div class="t" style="top:128.20px;font-size:9.5px;line-height:10.92px;color:#000;font-weight:normal;letter-spacing:0.3px;left:1579.5px;width:600px;text-align:center;">31-Mar-23</div>
<div class="t" style="top:142.20px;font-size:9.5px;line-height:10.92px;color:#000;font-weight:normal;letter-spacing:0.3px;left:1579.5px;width:600px;text-align:center;">2023</div>
<div class="t" style="top:157.20px;font-size:9.5px;line-height:10.92px;color:#000;font-weight:normal;letter-spacing:0.3px;left:1579.5px;width:600px;text-align:center;">1</div>
<div style="left:619px;top:197px;width:73px;height:1px;background:#217346;"></div>
<div style="left:20px;top:198px;width:1876px;height:1px;background:#a0a0a0;"></div>
<div class="t" style="top:217.20px;font-size:9.5px;line-height:10.92px;color:#000;font-weight:bold;left:100px;">4.02</div>
<div class="t" style="top:217.20px;font-size:9.5px;line-height:10.92px;color:#000;font-weight:bold;left:126px;">Other Fixed Costs</div>
<div class="t" style="top:217.20px;font-size:9.5px;line-height:10.92px;color:#1f1f3f;font-weight:normal;letter-spacing:0.3px;font-style:italic;left:366px;">Indexation</div>
<div style="left:161px;top:228px;width:203px;height:166px;background:#cfcfcf;"></div>
<div style="left:162px;top:229px;width:201px;height:14px;background:#ffff99;"></div>
<div style="left:162px;top:244px;width:201px;height:14px;background:#ffff99;"></div>
<div style="left:162px;top:259px;width:201px;height:14px;background:#ffff99;"></div>
<div style="left:162px;top:274px;width:201px;height:14px;background:#ffff99;"></div>
<div style="left:162px;top:289px;width:201px;height:14px;background:#ffff99;"></div>
<div style="left:162px;top:304px;width:201px;height:14px;background:#ffff99;"></div>
<div style="left:162px;top:319px;width:201px;height:14px;background:#ffff99;"></div>
<div style="left:162px;top:334px;width:201px;height:14px;background:#ffff99;"></div>
<div style="left:162px;top:349px;width:201px;height:14px;background:#ffff99;"></div>
<div style="left:162px;top:364px;width:201px;height:14px;background:#ffff99;"></div>
<div style="left:162px;top:379px;width:201px;height:14px;background:#ffff99;"></div>
<div style="left:363px;top:228px;width:77px;height:166px;background:#cfcfcf;"></div>
<div style="left:364px;top:229px;width:75px;height:14px;background:#ccff99;"></div>
<div style="left:364px;top:244px;width:75px;height:14px;background:#ccff99;"></div>
<div style="left:364px;top:259px;width:75px;height:14px;background:#ccff99;"></div>
<div style="left:364px;top:274px;width:75px;height:14px;background:#ccff99;"></div>
<div style="left:364px;top:289px;width:75px;height:14px;background:#ccff99;"></div>
<div style="left:364px;top:304px;width:75px;height:14px;background:#ccff99;"></div>
<div style="left:364px;top:319px;width:75px;height:14px;background:#ccff99;"></div>
<div style="left:364px;top:334px;width:75px;height:14px;background:#ccff99;"></div>
<div style="left:364px;top:349px;width:75px;height:14px;background:#ccff99;"></div>
<div style="left:364px;top:364px;width:75px;height:14px;background:#ccff99;"></div>
<div style="left:364px;top:379px;width:75px;height:14px;background:#ccff99;"></div>
<div style="left:452px;top:228px;width:72px;height:166px;background:#cfcfcf;"></div>
<div style="left:453px;top:229px;width:70px;height:14px;background:#ffff99;"></div>
<div style="left:453px;top:244px;width:70px;height:14px;background:#ffff99;"></div>
<div style="left:453px;top:259px;width:70px;height:14px;background:#ffff99;"></div>
<div style="left:453px;top:274px;width:70px;height:14px;background:#ffff99;"></div>
<div style="left:453px;top:289px;width:70px;height:14px;background:#ffff99;"></div>
<div style="left:453px;top:304px;width:70px;height:14px;background:#ffff99;"></div>
<div style="left:453px;top:319px;width:70px;height:14px;background:#ffff99;"></div>
<div style="left:453px;top:334px;width:70px;height:14px;background:#ffff99;"></div>
<div style="left:453px;top:349px;width:70px;height:14px;background:#ffff99;"></div>
<div style="left:453px;top:364px;width:70px;height:14px;background:#ffff99;"></div>
<div style="left:453px;top:379px;width:70px;height:14px;background:#ffff99;"></div>
<div class="t" style="top:232.20px;font-size:9.5px;line-height:10.92px;color:#000;font-weight:normal;letter-spacing:0.3px;left:164px;">Management Salary</div>
<div class="t" style="top:232.20px;font-size:9.5px;line-height:10.92px;color:#000;font-weight:normal;letter-spacing:0.3px;left:366px;">Base Case</div>
<svg style="position:absolute;left:442px;top:232px" width="9" height="8"><path d="M0 0H9L4.5 7.6Z" fill="#7f7f7f"/></svg>
<div class="t" style="top:232.20px;font-size:9.5px;line-height:10.92px;color:#000;font-weight:normal;letter-spacing:0.6px;right:1400px;text-align:right;">60,000.00</div>
<div class="t" style="top:232.20px;font-size:9.5px;line-height:10.92px;color:#808080;font-weight:normal;letter-spacing:0.3px;left:271.5px;width:600px;text-align:center;">US$</div>
<div class="t" style="top:232.20px;font-size:9.5px;line-height:10.92px;color:#ff0000;font-weight:normal;letter-spacing:0.3px;font-style:italic;left:622px;">Annual Cost Input</div>
<div class="t" style="top:247.20px;font-size:9.5px;line-height:10.92px;color:#000;font-weight:normal;letter-spacing:0.3px;left:164px;">Rent</div>
<div class="t" style="top:247.20px;font-size:9.5px;line-height:10.92px;color:#000;font-weight:normal;letter-spacing:0.3px;left:366px;">Base Case</div>
<svg style="position:absolute;left:442px;top:247px" width="9" height="8"><path d="M0 0H9L4.5 7.6Z" fill="#7f7f7f"/></svg>
<div class="t" style="top:247.20px;font-size:9.5px;line-height:10.92px;color:#000;font-weight:normal;letter-spacing:0.6px;right:1400px;text-align:right;">20,000.00</div>
<div class="t" style="top:247.20px;font-size:9.5px;line-height:10.92px;color:#808080;font-weight:normal;letter-spacing:0.3px;left:271.5px;width:600px;text-align:center;">US$</div>
<div class="t" style="top:247.20px;font-size:9.5px;line-height:10.92px;color:#ff0000;font-weight:normal;letter-spacing:0.3px;font-style:italic;left:622px;">Annual Cost Input</div>
<div class="t" style="top:262.20px;font-size:9.5px;line-height:10.92px;color:#000;font-weight:normal;letter-spacing:0.3px;left:164px;">Staff Cost</div>
<div class="t" style="top:262.20px;font-size:9.5px;line-height:10.92px;color:#000;font-weight:normal;letter-spacing:0.3px;left:366px;">Base Case</div>
<svg style="position:absolute;left:442px;top:262px" width="9" height="8"><path d="M0 0H9L4.5 7.6Z" fill="#7f7f7f"/></svg>
<div class="t" style="top:262.20px;font-size:9.5px;line-height:10.92px;color:#000;font-weight:normal;letter-spacing:0.6px;right:1400px;text-align:right;">40,000.00</div>
<div class="t" style="top:262.20px;font-size:9.5px;line-height:10.92px;color:#808080;font-weight:normal;letter-spacing:0.3px;left:271.5px;width:600px;text-align:center;">US$</div>
<div class="t" style="top:262.20px;font-size:9.5px;line-height:10.92px;color:#ff0000;font-weight:normal;letter-spacing:0.3px;font-style:italic;left:622px;">Annual Cost Input</div>
<div class="t" style="top:277.20px;font-size:9.5px;line-height:10.92px;color:#000;font-weight:normal;letter-spacing:0.3px;left:164px;">SPV Costs</div>
<div class="t" style="top:277.20px;font-size:9.5px;line-height:10.92px;color:#000;font-weight:normal;letter-spacing:0.3px;left:366px;">Base Case</div>
<svg style="position:absolute;left:442px;top:277px" width="9" height="8"><path d="M0 0H9L4.5 7.6Z" fill="#7f7f7f"/></svg>
<div class="t" style="top:277.20px;font-size:9.5px;line-height:10.92px;color:#000;font-weight:normal;letter-spacing:0.6px;right:1400px;text-align:right;">10,000.00</div>
<div class="t" style="top:277.20px;font-size:9.5px;line-height:10.92px;color:#808080;font-weight:normal;letter-spacing:0.3px;left:271.5px;width:600px;text-align:center;">US$</div>
<div class="t" style="top:277.20px;font-size:9.5px;line-height:10.92px;color:#ff0000;font-weight:normal;letter-spacing:0.3px;font-style:italic;left:622px;">Annual Cost Input</div>
<div class="t" style="top:292.20px;font-size:9.5px;line-height:10.92px;color:#000;font-weight:normal;letter-spacing:0.3px;left:164px;">Insurance</div>
<div class="t" style="top:292.20px;font-size:9.5px;line-height:10.92px;color:#000;font-weight:normal;letter-spacing:0.3px;left:366px;">Base Case</div>
<svg style="position:absolute;left:442px;top:292px" width="9" height="8"><path d="M0 0H9L4.5 7.6Z" fill="#7f7f7f"/></svg>
<div class="t" style="top:292.20px;font-size:9.5px;line-height:10.92px;color:#000;font-weight:normal;letter-spacing:0.6px;right:1400px;text-align:right;">12,000.00</div>
<div class="t" style="top:292.20px;font-size:9.5px;line-height:10.92px;color:#808080;font-weight:normal;letter-spacing:0.3px;left:271.5px;width:600px;text-align:center;">US$</div>
<div class="t" style="top:292.20px;font-size:9.5px;line-height:10.92px;color:#ff0000;font-weight:normal;letter-spacing:0.3px;font-style:italic;left:622px;">Annual Cost Input</div>
<div class="t" style="top:307.20px;font-size:9.5px;line-height:10.92px;color:#000;font-weight:normal;letter-spacing:0.3px;left:164px;">Security</div>
<div class="t" style="top:307.20px;font-size:9.5px;line-height:10.92px;color:#000;font-weight:normal;letter-spacing:0.3px;left:366px;">Base Case</div>
<svg style="position:absolute;left:442px;top:307px" width="9" height="8"><path d="M0 0H9L4.5 7.6Z" fill="#7f7f7f"/></svg>
<div class="t" style="top:307.20px;font-size:9.5px;line-height:10.92px;color:#000;font-weight:normal;letter-spacing:0.6px;right:1400px;text-align:right;">10,000.00</div>
<div class="t" style="top:307.20px;font-size:9.5px;line-height:10.92px;color:#808080;font-weight:normal;letter-spacing:0.3px;left:271.5px;width:600px;text-align:center;">US$</div>
<div class="t" style="top:307.20px;font-size:9.5px;line-height:10.92px;color:#ff0000;font-weight:normal;letter-spacing:0.3px;font-style:italic;left:622px;">Annual Cost Input</div>
<div class="t" style="top:322.20px;font-size:9.5px;line-height:10.92px;color:#000;font-weight:normal;letter-spacing:0.3px;left:164px;">License</div>
<div class="t" style="top:322.20px;font-size:9.5px;line-height:10.92px;color:#000;font-weight:normal;letter-spacing:0.3px;left:366px;">Base Case</div>
<svg style="position:absolute;left:442px;top:322px" width="9" height="8"><path d="M0 0H9L4.5 7.6Z" fill="#7f7f7f"/></svg>
<div class="t" style="top:322.20px;font-size:9.5px;line-height:10.92px;color:#000;font-weight:normal;letter-spacing:0.6px;right:1400px;text-align:right;">10,000.00</div>
<div class="t" style="top:322.20px;font-size:9.5px;line-height:10.92px;color:#808080;font-weight:normal;letter-spacing:0.3px;left:271.5px;width:600px;text-align:center;">US$</div>
<div class="t" style="top:322.20px;font-size:9.5px;line-height:10.92px;color:#ff0000;font-weight:normal;letter-spacing:0.3px;font-style:italic;left:622px;">Annual Cost Input</div>
<div class="t" style="top:337.20px;font-size:9.5px;line-height:10.92px;color:#000;font-weight:normal;letter-spacing:0.3px;left:164px;">[Spare]</div>
<div class="t" style="top:337.20px;font-size:9.5px;line-height:10.92px;color:#000;font-weight:normal;letter-spacing:0.3px;left:366px;">Base Case</div>
<svg style="position:absolute;left:442px;top:337px" width="9" height="8"><path d="M0 0H9L4.5 7.6Z" fill="#7f7f7f"/></svg>
<div class="t" style="top:337.20px;font-size:9.5px;line-height:10.92px;color:#000;font-weight:normal;letter-spacing:0.3px;right:1397px;text-align:right;">-</div>
<div class="t" style="top:337.20px;font-size:9.5px;line-height:10.92px;color:#808080;font-weight:normal;letter-spacing:0.3px;left:271.5px;width:600px;text-align:center;">US$</div>
<div class="t" style="top:337.20px;font-size:9.5px;line-height:10.92px;color:#ff0000;font-weight:normal;letter-spacing:0.3px;font-style:italic;left:622px;">Annual Cost Input</div>
<div class="t" style="top:352.20px;font-size:9.5px;line-height:10.92px;color:#000;font-weight:normal;letter-spacing:0.3px;left:164px;">[Spare]</div>
<div class="t" style="top:352.20px;font-size:9.5px;line-height:10.92px;color:#000;font-weight:normal;letter-spacing:0.3px;left:366px;">Base Case</div>
<svg style="position:absolute;left:442px;top:352px" width="9" height="8"><path d="M0 0H9L4.5 7.6Z" fill="#7f7f7f"/></svg>
<div class="t" style="top:352.20px;font-size:9.5px;line-height:10.92px;color:#000;font-weight:normal;letter-spacing:0.3px;right:1397px;text-align:right;">-</div>
<div class="t" style="top:352.20px;font-size:9.5px;line-height:10.92px;color:#808080;font-weight:normal;letter-spacing:0.3px;left:271.5px;width:600px;text-align:center;">US$</div>
<div class="t" style="top:352.20px;font-size:9.5px;line-height:10.92px;color:#ff0000;font-weight:normal;letter-spacing:0.3px;font-style:italic;left:622px;">Annual Cost Input</div>
<div class="t" style="top:367.20px;font-size:9.5px;line-height:10.92px;color:#000;font-weight:normal;letter-spacing:0.3px;left:164px;">[Spare]</div>
<div class="t" style="top:367.20px;font-size:9.5px;line-height:10.92px;color:#000;font-weight:normal;letter-spacing:0.3px;left:366px;">Base Case</div>
<svg style="position:absolute;left:442px;top:367px" width="9" height="8"><path d="M0 0H9L4.5 7.6Z" fill="#7f7f7f"/></svg>
<div class="t" style="top:367.20px;font-size:9.5px;line-height:10.92px;color:#000;font-weight:normal;letter-spacing:0.3px;right:1397px;text-align:right;">-</div>
<div class="t" style="top:367.20px;font-size:9.5px;line-height:10.92px;color:#808080;font-weight:normal;letter-spacing:0.3px;left:271.5px;width:600px;text-align:center;">US$</div>
<div class="t" style="top:367.20px;font-size:9.5px;line-height:10.92px;color:#ff0000;font-weight:normal;letter-spacing:0.3px;font-style:italic;left:622px;">Annual Cost Input</div>
<div class="t" style="top:382.20px;font-size:9.5px;line-height:10.92px;color:#000;font-weight:normal;letter-spacing:0.3px;left:164px;">[Spare]</div>
<div class="t" style="top:382.20px;font-size:9.5px;line-height:10.92px;color:#000;font-weight:normal;letter-spacing:0.3px;left:366px;">Base Case</div>
<svg style="position:absolute;left:442px;top:382px" width="9" height="8"><path d="M0 0H9L4.5 7.6Z" fill="#7f7f7f"/></svg>
<div class="t" style="top:382.20px;font-size:9.5px;line-height:10.92px;color:#000;font-weight:normal;letter-spacing:0.3px;right:1397px;text-align:right;">-</div>
<div class="t" style="top:382.20px;font-size:9.5px;line-height:10.92px;color:#808080;font-weight:normal;letter-spacing:0.3px;left:271.5px;width:600px;text-align:center;">US$</div>
<div class="t" style="top:382.20px;font-size:9.5px;line-height:10.92px;color:#ff0000;font-weight:normal;letter-spacing:0.3px;font-style:italic;left:622px;">Annual Cost Input</div>
<div style="left:21px;top:408px;width:1875px;height:17px;background:#44546a;"></div>
<div class="t" style="top:412.75px;font-size:10px;line-height:11.49px;color:#fff;font-weight:bold;left:49px;">5</div>
<div class="t" style="top:412.75px;font-size:10px;line-height:11.49px;color:#fff;font-weight:bold;left:63px;">Indexation</div>
<div class="t" style="top:443.20px;font-size:9.5px;line-height:10.92px;color:#000;font-weight:bold;left:100px;">5.01</div>
<div class="t" style="top:443.20px;font-size:9.5px;line-height:10.92px;color:#000;font-weight:bold;left:126px;">CPI %</div>
<div style="left:161px;top:454px;width:203px;height:151px;background:#cfcfcf;"></div>
<div style="left:162px;top:455px;width:201px;height:14px;background:#ffff99;"></div>
<div style="left:162px;top:470px;width:201px;height:14px;background:#ffff99;"></div>
<div style="left:162px;top:485px;width:201px;height:14px;background:#ffff99;"></div>
<div style="left:162px;top:500px;width:201px;height:14px;background:#ffff99;"></div>
<div style="left:162px;top:515px;width:201px;height:14px;background:#ffff99;"></div>
<div style="left:162px;top:530px;width:201px;height:14px;background:#ffff99;"></div>
<div style="left:162px;top:545px;width:201px;height:14px;background:#ffff99;"></div>
<div style="left:162px;top:560px;width:201px;height:14px;background:#ffff99;"></div>
<div style="left:162px;top:575px;width:201px;height:14px;background:#ffff99;"></div>
<div style="left:162px;top:590px;width:201px;height:14px;background:#ffff99;"></div>
<div style="left:619px;top:439px;width:721px;height:16px;background:#cfcfcf;"></div>
<div style="left:620px;top:440px;width:71px;height:14px;background:#ddebf7;"></div>
<div style="left:692px;top:440px;width:71px;height:14px;background:#ddebf7;"></div>
<div style="left:764px;top:440px;width:71px;height:14px;background:#ddebf7;"></div>
<div style="left:836px;top:440px;width:71px;height:14px;background:#ddebf7;"></div>
<div style="left:908px;top:440px;width:71px;height:14px;background:#ddebf7;"></div>
<div style="left:980px;top:440px;width:71px;height:14px;background:#ddebf7;"></div>
<div style="left:1052px;top:440px;width:71px;height:14px;background:#ddebf7;"></div>
<div style="left:1124px;top:440px;width:71px;height:14px;background:#ddebf7;"></div>
<div style="left:1196px;top:440px;width:71px;height:14px;background:#ddebf7;"></div>
<div style="left:1268px;top:440px;width:71px;height:14px;background:#ddebf7;"></div>
<div style="left:619px;top:454px;width:721px;height:151px;background:#cfcfcf;"></div>
<div style="left:620px;top:455px;width:71px;height:14px;background:#ffff99;"></div>
<div style="left:620px;top:470px;width:71px;height:14px;background:#ffff99;"></div>
<div style="left:620px;top:485px;width:71px;height:14px;background:#ffff99;"></div>
<div style="left:620px;top:500px;width:71px;height:14px;background:#ffff99;"></div>
<div style="left:620px;top:515px;width:71px;height:14px;background:#ffff99;"></div>
<div style="left:620px;top:530px;width:71px;height:14px;background:#ffff99;"></div>
<div style="left:620px;top:545px;width:71px;height:14px;background:#ffff99;"></div>
<div style="left:620px;top:560px;width:71px;height:14px;background:#ffff99;"></div>
<div style="left:620px;top:575px;width:71px;height:14px;background:#ffff99;"></div>
<div style="left:620px;top:590px;width:71px;height:14px;background:#ffff99;"></div>
<div style="left:692px;top:455px;width:71px;height:14px;background:#ffff99;"></div>
<div style="left:692px;top:470px;width:71px;height:14px;background:#ffff99;"></div>
<div style="left:692px;top:485px;width:71px;height:14px;background:#ffff99;"></div>
<div style="left:692px;top:500px;width:71px;height:14px;background:#ffff99;"></div>
<div style="left:692px;top:515px;width:71px;height:14px;background:#ffff99;"></div>
<div style="left:692px;top:530px;width:71px;height:14px;background:#ffff99;"></div>
<div style="left:692px;top:545px;width:71px;height:14px;background:#ffff99;"></div>
<div style="left:692px;top:560px;width:71px;height:14px;background:#ffff99;"></div>
<div style="left:692px;top:575px;width:71px;height:14px;background:#ffff99;"></div>
<div style="left:692px;top:590px;width:71px;height:14px;background:#ffff99;"></div>
<div style="left:764px;top:455px;width:71px;height:14px;background:#ffff99;"></div>
<div style="left:764px;top:470px;width:71px;height:14px;background:#ffff99;"></div>
<div style="left:764px;top:485px;width:71px;height:14px;background:#ffff99;"></div>
<div style="left:764px;top:500px;width:71px;height:14px;background:#ffff99;"></div>
<div style="left:764px;top:515px;width:71px;height:14px;background:#ffff99;"></div>
<div style="left:764px;top:530px;width:71px;height:14px;background:#ffff99;"></div>
<div style="left:764px;top:545px;width:71px;height:14px;background:#ffff99;"></div>
<div style="left:764px;top:560px;width:71px;height:14px;background:#ffff99;"></div>
<div style="left:764px;top:575px;width:71px;height:14px;background:#ffff99;"></div>
<div style="left:764px;top:590px;width:71px;height:14px;background:#ffff99;"></div>
<div style="left:836px;top:455px;width:71px;height:14px;background:#ffff99;"></div>
<div style="left:836px;top:470px;width:71px;height:14px;background:#ffff99;"></div>
<div style="left:836px;top:485px;width:71px;height:14px;background:#ffff99;"></div>
<div style="left:836px;top:500px;width:71px;height:14px;background:#ffff99;"></div>
<div style="left:836px;top:515px;width:71px;height:14px;background:#ffff99;"></div>
<div style="left:836px;top:530px;width:71px;height:14px;background:#ffff99;"></div>
<div style="left:836px;top:545px;width:71px;height:14px;background:#ffff99;"></div>
<div style="left:836px;top:560px;width:71px;height:14px;background:#ffff99;"></div>
<div style="left:836px;top:575px;width:71px;height:14px;background:#ffff99;"></div>
<div style="left:836px;top:590px;width:71px;height:14px;background:#ffff99;"></div>
<div style="left:908px;top:455px;width:71px;height:14px;background:#ffff99;"></div>
<div style="left:908px;top:470px;width:71px;height:14px;background:#ffff99;"></div>
<div style="left:908px;top:485px;width:71px;height:14px;background:#ffff99;"></div>
<div style="left:908px;top:500px;width:71px;height:14px;background:#ffff99;"></div>
<div style="left:908px;top:515px;width:71px;height:14px;background:#ffff99;"></div>
<div style="left:908px;top:530px;width:71px;height:14px;background:#ffff99;"></div>
<div style="left:908px;top:545px;width:71px;height:14px;background:#ffff99;"></div>
<div style="left:908px;top:560px;width:71px;height:14px;background:#ffff99;"></div>
<div style="left:908px;top:575px;width:71px;height:14px;background:#ffff99;"></div>
<div style="left:908px;top:590px;width:71px;height:14px;background:#ffff99;"></div>
<div style="left:980px;top:455px;width:71px;height:14px;background:#ffff99;"></div>
<div style="left:980px;top:470px;width:71px;height:14px;background:#ffff99;"></div>
<div style="left:980px;top:485px;width:71px;height:14px;background:#ffff99;"></div>
<div style="left:980px;top:500px;width:71px;height:14px;background:#ffff99;"></div>
<div style="left:980px;top:515px;width:71px;height:14px;background:#ffff99;"></div>
<div style="left:980px;top:530px;width:71px;height:14px;background:#ffff99;"></div>
<div style="left:980px;top:545px;width:71px;height:14px;background:#ffff99;"></div>
<div style="left:980px;top:560px;width:71px;height:14px;background:#ffff99;"></div>
<div style="left:980px;top:575px;width:71px;height:14px;background:#ffff99;"></div>
<div style="left:980px;top:590px;width:71px;height:14px;background:#ffff99;"></div>
<div style="left:1052px;top:455px;width:71px;height:14px;background:#ffff99;"></div>
<div style="left:1052px;top:470px;width:71px;height:14px;background:#ffff99;"></div>
<div style="left:1052px;top:485px;width:71px;height:14px;background:#ffff99;"></div>
<div style="left:1052px;top:500px;width:71px;height:14px;background:#ffff99;"></div>
<div style="left:1052px;top:515px;width:71px;height:14px;background:#ffff99;"></div>
<div style="left:1052px;top:530px;width:71px;height:14px;background:#ffff99;"></div>
<div style="left:1052px;top:545px;width:71px;height:14px;background:#ffff99;"></div>
<div style="left:1052px;top:560px;width:71px;height:14px;background:#ffff99;"></div>
<div style="left:1052px;top:575px;width:71px;height:14px;background:#ffff99;"></div>
<div style="left:1052px;top:590px;width:71px;height:14px;background:#ffff99;"></div>
<div style="left:1124px;top:455px;width:71px;height:14px;background:#ffff99;"></div>
<div style="left:1124px;top:470px;width:71px;height:14px;background:#ffff99;"></div>
<div style="left:1124px;top:485px;width:71px;height:14px;background:#ffff99;"></div>
<div style="left:1124px;top:500px;width:71px;height:14px;background:#ffff99;"></div>
<div style="left:1124px;top:515px;width:71px;height:14px;background:#ffff99;"></div>
<div style="left:1124px;top:530px;width:71px;height:14px;background:#ffff99;"></div>
<div style="left:1124px;top:545px;width:71px;height:14px;background:#ffff99;"></div>
<div style="left:1124px;top:560px;width:71px;height:14px;background:#ffff99;"></div>
<div style="left:1124px;top:575px;width:71px;height:14px;background:#ffff99;"></div>
<div style="left:1124px;top:590px;width:71px;height:14px;background:#ffff99;"></div>
<div style="left:1196px;top:455px;width:71px;height:14px;background:#ffff99;"></div>
<div style="left:1196px;top:470px;width:71px;height:14px;background:#ffff99;"></div>
<div style="left:1196px;top:485px;width:71px;height:14px;background:#ffff99;"></div>
<div style="left:1196px;top:500px;width:71px;height:14px;background:#ffff99;"></div>
<div style="left:1196px;top:515px;width:71px;height:14px;background:#ffff99;"></div>
<div style="left:1196px;top:530px;width:71px;height:14px;background:#ffff99;"></div>
<div style="left:1196px;top:545px;width:71px;height:14px;background:#ffff99;"></div>
<div style="left:1196px;top:560px;width:71px;height:14px;background:#ffff99;"></div>
<div style="left:1196px;top:575px;width:71px;height:14px;background:#ffff99;"></div>
<div style="left:1196px;top:590px;width:71px;height:14px;background:#ffff99;"></div>
<div style="left:1268px;top:455px;width:71px;height:14px;background:#ffff99;"></div>
<div style="left:1268px;top:470px;width:71px;height:14px;background:#ffff99;"></div>
<div style="left:1268px;top:485px;width:71px;height:14px;background:#ffff99;"></div>
<div style="left:1268px;top:500px;width:71px;height:14px;background:#ffff99;"></div>
<div style="left:1268px;top:515px;width:71px;height:14px;background:#ffff99;"></div>
<div style="left:1268px;top:530px;width:71px;height:14px;background:#ffff99;"></div>
<div style="left:1268px;top:545px;width:71px;height:14px;background:#ffff99;"></div>
<div style="left:1268px;top:560px;width:71px;height:14px;background:#ffff99;"></div>
<div style="left:1268px;top:575px;width:71px;height:14px;background:#ffff99;"></div>
<div style="left:1268px;top:590px;width:71px;height:14px;background:#ffff99;"></div>
<div class="t" style="top:442.75px;font-size:10px;line-height:11.49px;color:#f4661b;font-weight:bold;letter-spacing:0.1px;right:1229.3px;text-align:right;">2021</div>
<div class="t" style="top:442.75px;font-size:10px;line-height:11.49px;color:#f4661b;font-weight:bold;letter-spacing:0.1px;right:1157.3px;text-align:right;">2022</div>
<div class="t" style="top:442.75px;font-size:10px;line-height:11.49px;color:#f4661b;font-weight:bold;letter-spacing:0.1px;right:1085.3px;text-align:right;">2023</div>
<div class="t" style="top:442.75px;font-size:10px;line-height:11.49px;color:#f4661b;font-weight:bold;letter-spacing:0.1px;right:1013.3px;text-align:right;">2024</div>
<div class="t" style="top:442.75px;font-size:10px;line-height:11.49px;color:#f4661b;font-weight:bold;letter-spacing:0.1px;right:941.3px;text-align:right;">2025</div>
<div class="t" style="top:442.75px;font-size:10px;line-height:11.49px;color:#f4661b;font-weight:bold;letter-spacing:0.1px;right:869.3px;text-align:right;">2026</div>
<div class="t" style="top:442.75px;font-size:10px;line-height:11.49px;color:#f4661b;font-weight:bold;letter-spacing:0.1px;right:797.3px;text-align:right;">2027</div>
<div class="t" style="top:442.75px;font-size:10px;line-height:11.49px;color:#f4661b;font-weight:bold;letter-spacing:0.1px;right:725.3px;text-align:right;">2028</div>
<div class="t" style="top:442.75px;font-size:10px;line-height:11.49px;color:#f4661b;font-weight:bold;letter-spacing:0.1px;right:653.3px;text-align:right;">2029</div>
<div class="t" style="top:442.75px;font-size:10px;line-height:11.49px;color:#f4661b;font-weight:bold;letter-spacing:0.1px;right:581.3px;text-align:right;">2030</div>
<div class="t" style="top:458.20px;font-size:9.5px;line-height:10.92px;color:#000;font-weight:bold;right:1759px;text-align:right;">1</div>
<div class="t" style="top:458.20px;font-size:9.5px;line-height:10.92px;color:#000;font-weight:normal;letter-spacing:0.3px;left:164px;">Flat</div>
<div class="t" style="top:458.20px;font-size:9.5px;line-height:10.92px;color:#808080;font-weight:normal;letter-spacing:0.3px;left:271.5px;width:600px;text-align:center;">%</div>
<div class="t" style="top:458.20px;font-size:9.5px;line-height:10.92px;color:#000;font-weight:normal;letter-spacing:0.3px;right:1229px;text-align:right;">-</div>
<div class="t" style="top:458.20px;font-size:9.5px;line-height:10.92px;color:#000;font-weight:normal;letter-spacing:0.3px;right:1157px;text-align:right;">-</div>
<div class="t" style="top:458.20px;font-size:9.5px;line-height:10.92px;color:#000;font-weight:normal;letter-spacing:0.3px;right:1085px;text-align:right;">-</div>
<div class="t" style="top:458.20px;font-size:9.5px;line-height:10.92px;color:#000;font-weight:normal;letter-spacing:0.3px;right:1013px;text-align:right;">-</div>
<div class="t" style="top:458.20px;font-size:9.5px;line-height:10.92px;color:#000;font-weight:normal;letter-spacing:0.3px;right:941px;text-align:right;">-</div>
<div class="t" style="top:458.20px;font-size:9.5px;line-height:10.92px;color:#000;font-weight:normal;letter-spacing:0.3px;right:869px;text-align:right;">-</div>
<div class="t" style="top:458.20px;font-size:9.5px;line-height:10.92px;color:#000;font-weight:normal;letter-spacing:0.3px;right:797px;text-align:right;">-</div>
<div class="t" style="top:458.20px;font-size:9.5px;line-height:10.92px;color:#000;font-weight:normal;letter-spacing:0.3px;right:725px;text-align:right;">-</div>
<div class="t" style="top:458.20px;font-size:9.5px;line-height:10.92px;color:#000;font-weight:normal;letter-spacing:0.3px;right:653px;text-align:right;">-</div>
<div class="t" style="top:458.20px;font-size:9.5px;line-height:10.92px;color:#000;font-weight:normal;letter-spacing:0.3px;right:581px;text-align:right;">-</div>
<div class="t" style="top:473.20px;font-size:9.5px;line-height:10.92px;color:#000;font-weight:bold;right:1759px;text-align:right;">2</div>
<div class="t" style="top:473.20px;font-size:9.5px;line-height:10.92px;color:#000;font-weight:normal;letter-spacing:0.3px;left:164px;">High Case</div>
<div class="t" style="top:473.20px;font-size:9.5px;line-height:10.92px;color:#808080;font-weight:normal;letter-spacing:0.3px;left:271.5px;width:600px;text-align:center;">%</div>
<div class="t" style="top:473.20px;font-size:9.5px;line-height:10.92px;color:#000;font-weight:normal;letter-spacing:0.3px;right:1232px;text-align:right;">3.5%</div>
<div class="t" style="top:473.20px;font-size:9.5px;line-height:10.92px;color:#000;font-weight:normal;letter-spacing:0.3px;right:1160px;text-align:right;">3.5%</div>
<div class="t" style="top:473.20px;font-size:9.5px;line-height:10.92px;color:#000;font-weight:normal;letter-spacing:0.3px;right:1088px;text-align:right;">3.5%</div>
<div class="t" style="top:473.20px;font-size:9.5px;line-height:10.92px;color:#000;font-weight:normal;letter-spacing:0.3px;right:1016px;text-align:right;">3.5%</div>
<div class="t" style="top:473.20px;font-size:9.5px;line-height:10.92px;color:#000;font-weight:normal;letter-spacing:0.3px;right:944px;text-align:right;">3.5%</div>
<div class="t" style="top:473.20px;font-size:9.5px;line-height:10.92px;color:#000;font-weight:normal;letter-spacing:0.3px;right:872px;text-align:right;">3.5%</div>
<div class="t" style="top:473.20px;font-size:9.5px;line-height:10.92px;color:#000;font-weight:normal;letter-spacing:0.3px;right:800px;text-align:right;">3.5%</div>
<div class="t" style="top:473.20px;font-size:9.5px;line-height:10.92px;color:#000;font-weight:normal;letter-spacing:0.3px;right:728px;text-align:right;">3.5%</div>
<div class="t" style="top:473.20px;font-size:9.5px;line-height:10.92px;color:#000;font-weight:normal;letter-spacing:0.3px;right:656px;text-align:right;">3.5%</div>
<div class="t" style="top:473.20px;font-size:9.5px;line-height:10.92px;color:#000;font-weight:normal;letter-spacing:0.3px;right:584px;text-align:right;">3.5%</div>
<div class="t" style="top:488.20px;font-size:9.5px;line-height:10.92px;color:#000;font-weight:bold;right:1759px;text-align:right;">3</div>
<div class="t" style="top:488.20px;font-size:9.5px;line-height:10.92px;color:#000;font-weight:normal;letter-spacing:0.3px;left:164px;">Base Case</div>
<div class="t" style="top:488.20px;font-size:9.5px;line-height:10.92px;color:#808080;font-weight:normal;letter-spacing:0.3px;left:271.5px;width:600px;text-align:center;">%</div>
<div class="t" style="top:488.20px;font-size:9.5px;line-height:10.92px;color:#000;font-weight:normal;letter-spacing:0.3px;right:1232px;text-align:right;">2.0%</div>
<div class="t" style="top:488.20px;font-size:9.5px;line-height:10.92px;color:#000;font-weight:normal;letter-spacing:0.3px;right:1160px;text-align:right;">2.0%</div>
<div class="t" style="top:488.20px;font-size:9.5px;line-height:10.92px;color:#000;font-weight:normal;letter-spacing:0.3px;right:1088px;text-align:right;">2.5%</div>
<div class="t" style="top:488.20px;font-size:9.5px;line-height:10.92px;color:#000;font-weight:normal;letter-spacing:0.3px;right:1016px;text-align:right;">2.5%</div>
<div class="t" style="top:488.20px;font-size:9.5px;line-height:10.92px;color:#000;font-weight:normal;letter-spacing:0.3px;right:944px;text-align:right;">2.8%</div>
<div class="t" style="top:488.20px;font-size:9.5px;line-height:10.92px;color:#000;font-weight:normal;letter-spacing:0.3px;right:872px;text-align:right;">2.8%</div>
<div class="t" style="top:488.20px;font-size:9.5px;line-height:10.92px;color:#000;font-weight:normal;letter-spacing:0.3px;right:800px;text-align:right;">3.0%</div>
<div class="t" style="top:488.20px;font-size:9.5px;line-height:10.92px;color:#000;font-weight:normal;letter-spacing:0.3px;right:728px;text-align:right;">3.0%</div>
<div class="t" style="top:488.20px;font-size:9.5px;line-height:10.92px;color:#000;font-weight:normal;letter-spacing:0.3px;right:656px;text-align:right;">3.0%</div>
<div class="t" style="top:488.20px;font-size:9.5px;line-height:10.92px;color:#000;font-weight:normal;letter-spacing:0.3px;right:584px;text-align:right;">3.0%</div>
<div class="t" style="top:503.20px;font-size:9.5px;line-height:10.92px;color:#000;font-weight:bold;right:1759px;text-align:right;">4</div>
<div class="t" style="top:503.20px;font-size:9.5px;line-height:10.92px;color:#000;font-weight:normal;letter-spacing:0.3px;left:164px;">Low Case</div>
<div class="t" style="top:503.20px;font-size:9.5px;line-height:10.92px;color:#808080;font-weight:normal;letter-spacing:0.3px;left:271.5px;width:600px;text-align:center;">%</div>
<div class="t" style="top:503.20px;font-size:9.5px;line-height:10.92px;color:#000;font-weight:normal;letter-spacing:0.3px;right:1232px;text-align:right;">1.5%</div>
<div class="t" style="top:503.20px;font-size:9.5px;line-height:10.92px;color:#000;font-weight:normal;letter-spacing:0.3px;right:1160px;text-align:right;">1.5%</div>
<div class="t" style="top:503.20px;font-size:9.5px;line-height:10.92px;color:#000;font-weight:normal;letter-spacing:0.3px;right:1088px;text-align:right;">1.5%</div>
<div class="t" style="top:503.20px;font-size:9.5px;line-height:10.92px;color:#000;font-weight:normal;letter-spacing:0.3px;right:1016px;text-align:right;">1.5%</div>
<div class="t" style="top:503.20px;font-size:9.5px;line-height:10.92px;color:#000;font-weight:normal;letter-spacing:0.3px;right:944px;text-align:right;">1.5%</div>
<div class="t" style="top:503.20px;font-size:9.5px;line-height:10.92px;color:#000;font-weight:normal;letter-spacing:0.3px;right:872px;text-align:right;">1.5%</div>
<div class="t" style="top:503.20px;font-size:9.5px;line-height:10.92px;color:#000;font-weight:normal;letter-spacing:0.3px;right:800px;text-align:right;">1.5%</div>
<div class="t" style="top:503.20px;font-size:9.5px;line-height:10.92px;color:#000;font-weight:normal;letter-spacing:0.3px;right:728px;text-align:right;">1.5%</div>
<div class="t" style="top:503.20px;font-size:9.5px;line-height:10.92px;color:#000;font-weight:normal;letter-spacing:0.3px;right:656px;text-align:right;">1.5%</div>
<div class="t" style="top:503.20px;font-size:9.5px;line-height:10.92px;color:#000;font-weight:normal;letter-spacing:0.3px;right:584px;text-align:right;">1.5%</div>
<div class="t" style="top:518.20px;font-size:9.5px;line-height:10.92px;color:#000;font-weight:bold;right:1759px;text-align:right;">5</div>
<div class="t" style="top:518.20px;font-size:9.5px;line-height:10.92px;color:#000;font-weight:normal;letter-spacing:0.3px;left:164px;">Merchant Price</div>
<div class="t" style="top:518.20px;font-size:9.5px;line-height:10.92px;color:#808080;font-weight:normal;letter-spacing:0.3px;left:271.5px;width:600px;text-align:center;">%</div>
<div class="t" style="top:518.20px;font-size:9.5px;line-height:10.92px;color:#000;font-weight:normal;letter-spacing:0.3px;right:1229px;text-align:right;">-</div>
<div class="t" style="top:518.20px;font-size:9.5px;line-height:10.92px;color:#000;font-weight:normal;letter-spacing:0.3px;right:1160px;text-align:right;">10.0%</div>
<div class="t" style="top:518.20px;font-size:9.5px;line-height:10.92px;color:#000;font-weight:normal;letter-spacing:0.3px;right:1088px;text-align:right;">10.0%</div>
<div class="t" style="top:518.20px;font-size:9.5px;line-height:10.92px;color:#000;font-weight:normal;letter-spacing:0.3px;right:1013px;text-align:right;">-</div>
<div class="t" style="top:518.20px;font-size:9.5px;line-height:10.92px;color:#000;font-weight:normal;letter-spacing:0.3px;right:941px;text-align:right;">-</div>
<div class="t" style="top:518.20px;font-size:9.5px;line-height:10.92px;color:#000;font-weight:normal;letter-spacing:0.3px;right:869px;text-align:right;">-</div>
<div class="t" style="top:518.20px;font-size:9.5px;line-height:10.92px;color:#000;font-weight:normal;letter-spacing:0.3px;right:797px;text-align:right;">-</div>
<div class="t" style="top:518.20px;font-size:9.5px;line-height:10.92px;color:#000;font-weight:normal;letter-spacing:0.3px;right:725px;text-align:right;">-</div>
<div class="t" style="top:518.20px;font-size:9.5px;line-height:10.92px;color:#000;font-weight:normal;letter-spacing:0.3px;right:653px;text-align:right;">-</div>
<div class="t" style="top:518.20px;font-size:9.5px;line-height:10.92px;color:#000;font-weight:normal;letter-spacing:0.3px;right:581px;text-align:right;">-</div>
<div class="t" style="top:533.20px;font-size:9.5px;line-height:10.92px;color:#000;font-weight:bold;right:1759px;text-align:right;">6</div>
<div class="t" style="top:533.20px;font-size:9.5px;line-height:10.92px;color:#000;font-weight:normal;letter-spacing:0.3px;left:164px;">Case 2</div>
<div class="t" style="top:533.20px;font-size:9.5px;line-height:10.92px;color:#808080;font-weight:normal;letter-spacing:0.3px;left:271.5px;width:600px;text-align:center;">%</div>
<div class="t" style="top:533.20px;font-size:9.5px;line-height:10.92px;color:#000;font-weight:normal;letter-spacing:0.3px;right:1229px;text-align:right;">-</div>
<div class="t" style="top:533.20px;font-size:9.5px;line-height:10.92px;color:#000;font-weight:normal;letter-spacing:0.3px;right:1157px;text-align:right;">-</div>
<div class="t" style="top:533.20px;font-size:9.5px;line-height:10.92px;color:#000;font-weight:normal;letter-spacing:0.3px;right:1085px;text-align:right;">-</div>
<div class="t" style="top:533.20px;font-size:9.5px;line-height:10.92px;color:#000;font-weight:normal;letter-spacing:0.3px;right:1013px;text-align:right;">-</div>
<div class="t" style="top:533.20px;font-size:9.5px;line-height:10.92px;color:#000;font-weight:normal;letter-spacing:0.3px;right:941px;text-align:right;">-</div>
<div class="t" style="top:533.20px;font-size:9.5px;line-height:10.92px;color:#000;font-weight:normal;letter-spacing:0.3px;right:869px;text-align:right;">-</div>
<div class="t" style="top:533.20px;font-size:9.5px;line-height:10.92px;color:#000;font-weight:normal;letter-spacing:0.3px;right:797px;text-align:right;">-</div>
<div class="t" style="top:533.20px;font-size:9.5px;line-height:10.92px;color:#000;font-weight:normal;letter-spacing:0.3px;right:725px;text-align:right;">-</div>
<div class="t" style="top:533.20px;font-size:9.5px;line-height:10.92px;color:#000;font-weight:normal;letter-spacing:0.3px;right:653px;text-align:right;">-</div>
<div class="t" style="top:533.20px;font-size:9.5px;line-height:10.92px;color:#000;font-weight:normal;letter-spacing:0.3px;right:581px;text-align:right;">-</div>
<div class="t" style="top:548.20px;font-size:9.5px;line-height:10.92px;color:#000;font-weight:bold;right:1759px;text-align:right;">7</div>
<div class="t" style="top:548.20px;font-size:9.5px;line-height:10.92px;color:#000;font-weight:normal;letter-spacing:0.3px;left:164px;">Case 3</div>
<div class="t" style="top:548.20px;font-size:9.5px;line-height:10.92px;color:#808080;font-weight:normal;letter-spacing:0.3px;left:271.5px;width:600px;text-align:center;">%</div>
<div class="t" style="top:548.20px;font-size:9.5px;line-height:10.92px;color:#000;font-weight:normal;letter-spacing:0.3px;right:1229px;text-align:right;">-</div>
<div class="t" style="top:548.20px;font-size:9.5px;line-height:10.92px;color:#000;font-weight:normal;letter-spacing:0.3px;right:1157px;text-align:right;">-</div>
<div class="t" style="top:548.20px;font-size:9.5px;line-height:10.92px;color:#000;font-weight:normal;letter-spacing:0.3px;right:1085px;text-align:right;">-</div>
<div class="t" style="top:548.20px;font-size:9.5px;line-height:10.92px;color:#000;font-weight:normal;letter-spacing:0.3px;right:1013px;text-align:right;">-</div>
<div class="t" style="top:548.20px;font-size:9.5px;line-height:10.92px;color:#000;font-weight:normal;letter-spacing:0.3px;right:941px;text-align:right;">-</div>
<div class="t" style="top:548.20px;font-size:9.5px;line-height:10.92px;color:#000;font-weight:normal;letter-spacing:0.3px;right:869px;text-align:right;">-</div>
<div class="t" style="top:548.20px;font-size:9.5px;line-height:10.92px;color:#000;font-weight:normal;letter-spacing:0.3px;right:797px;text-align:right;">-</div>
<div class="t" style="top:548.20px;font-size:9.5px;line-height:10.92px;color:#000;font-weight:normal;letter-spacing:0.3px;right:725px;text-align:right;">-</div>
<div class="t" style="top:548.20px;font-size:9.5px;line-height:10.92px;color:#000;font-weight:normal;letter-spacing:0.3px;right:653px;text-align:right;">-</div>
<div class="t" style="top:548.20px;font-size:9.5px;line-height:10.92px;color:#000;font-weight:normal;letter-spacing:0.3px;right:581px;text-align:right;">-</div>
<div class="t" style="top:563.20px;font-size:9.5px;line-height:10.92px;color:#000;font-weight:bold;right:1759px;text-align:right;">8</div>
<div class="t" style="top:563.20px;font-size:9.5px;line-height:10.92px;color:#000;font-weight:normal;letter-spacing:0.3px;left:164px;">Case 4</div>
<div class="t" style="top:563.20px;font-size:9.5px;line-height:10.92px;color:#808080;font-weight:normal;letter-spacing:0.3px;left:271.5px;width:600px;text-align:center;">%</div>
<div class="t" style="top:563.20px;font-size:9.5px;line-height:10.92px;color:#000;font-weight:normal;letter-spacing:0.3px;right:1229px;text-align:right;">-</div>
<div class="t" style="top:563.20px;font-size:9.5px;line-height:10.92px;color:#000;font-weight:normal;letter-spacing:0.3px;right:1157px;text-align:right;">-</div>
<div class="t" style="top:563.20px;font-size:9.5px;line-height:10.92px;color:#000;font-weight:normal;letter-spacing:0.3px;right:1085px;text-align:right;">-</div>
<div class="t" style="top:563.20px;font-size:9.5px;line-height:10.92px;color:#000;font-weight:normal;letter-spacing:0.3px;right:1013px;text-align:right;">-</div>
<div class="t" style="top:563.20px;font-size:9.5px;line-height:10.92px;color:#000;font-weight:normal;letter-spacing:0.3px;right:941px;text-align:right;">-</div>
<div class="t" style="top:563.20px;font-size:9.5px;line-height:10.92px;color:#000;font-weight:normal;letter-spacing:0.3px;right:869px;text-align:right;">-</div>
<div class="t" style="top:563.20px;font-size:9.5px;line-height:10.92px;color:#000;font-weight:normal;letter-spacing:0.3px;right:797px;text-align:right;">-</div>
<div class="t" style="top:563.20px;font-size:9.5px;line-height:10.92px;color:#000;font-weight:normal;letter-spacing:0.3px;right:725px;text-align:right;">-</div>
<div class="t" style="top:563.20px;font-size:9.5px;line-height:10.92px;color:#000;font-weight:normal;letter-spacing:0.3px;right:653px;text-align:right;">-</div>
<div class="t" style="top:563.20px;font-size:9.5px;line-height:10.92px;color:#000;font-weight:normal;letter-spacing:0.3px;right:581px;text-align:right;">-</div>
<div class="t" style="top:578.20px;font-size:9.5px;line-height:10.92px;color:#000;font-weight:bold;right:1759px;text-align:right;">9</div>
<div class="t" style="top:578.20px;font-size:9.5px;line-height:10.92px;color:#000;font-weight:normal;letter-spacing:0.3px;left:164px;">Case 5</div>
<div class="t" style="top:578.20px;font-size:9.5px;line-height:10.92px;color:#808080;font-weight:normal;letter-spacing:0.3px;left:271.5px;width:600px;text-align:center;">%</div>
<div class="t" style="top:578.20px;font-size:9.5px;line-height:10.92px;color:#000;font-weight:normal;letter-spacing:0.3px;right:1229px;text-align:right;">-</div>
<div class="t" style="top:578.20px;font-size:9.5px;line-height:10.92px;color:#000;font-weight:normal;letter-spacing:0.3px;right:1157px;text-align:right;">-</div>
<div class="t" style="top:578.20px;font-size:9.5px;line-height:10.92px;color:#000;font-weight:normal;letter-spacing:0.3px;right:1085px;text-align:right;">-</div>
<div class="t" style="top:578.20px;font-size:9.5px;line-height:10.92px;color:#000;font-weight:normal;letter-spacing:0.3px;right:1013px;text-align:right;">-</div>
<div class="t" style="top:578.20px;font-size:9.5px;line-height:10.92px;color:#000;font-weight:normal;letter-spacing:0.3px;right:941px;text-align:right;">-</div>
<div class="t" style="top:578.20px;font-size:9.5px;line-height:10.92px;color:#000;font-weight:normal;letter-spacing:0.3px;right:869px;text-align:right;">-</div>
<div class="t" style="top:578.20px;font-size:9.5px;line-height:10.92px;color:#000;font-weight:normal;letter-spacing:0.3px;right:797px;text-align:right;">-</div>
<div class="t" style="top:578.20px;font-size:9.5px;line-height:10.92px;color:#000;font-weight:normal;letter-spacing:0.3px;right:725px;text-align:right;">-</div>
<div class="t" style="top:578.20px;font-size:9.5px;line-height:10.92px;color:#000;font-weight:normal;letter-spacing:0.3px;right:653px;text-align:right;">-</div>
<div class="t" style="top:578.20px;font-size:9.5px;line-height:10.92px;color:#000;font-weight:normal;letter-spacing:0.3px;right:581px;text-align:right;">-</div>
<div class="t" style="top:593.20px;font-size:9.5px;line-height:10.92px;color:#000;font-weight:bold;right:1759px;text-align:right;">10</div>
<div class="t" style="top:593.20px;font-size:9.5px;line-height:10.92px;color:#000;font-weight:normal;letter-spacing:0.3px;left:164px;">Case 6</div>
<div class="t" style="top:593.20px;font-size:9.5px;line-height:10.92px;color:#808080;font-weight:normal;letter-spacing:0.3px;left:271.5px;width:600px;text-align:center;">%</div>
<div class="t" style="top:593.20px;font-size:9.5px;line-height:10.92px;color:#000;font-weight:normal;letter-spacing:0.3px;right:1229px;text-align:right;">-</div>
<div class="t" style="top:593.20px;font-size:9.5px;line-height:10.92px;color:#000;font-weight:normal;letter-spacing:0.3px;right:1157px;text-align:right;">-</div>
<div class="t" style="top:593.20px;font-size:9.5px;line-height:10.92px;color:#000;font-weight:normal;letter-spacing:0.3px;right:1085px;text-align:right;">-</div>
<div class="t" style="top:593.20px;font-size:9.5px;line-height:10.92px;color:#000;font-weight:normal;letter-spacing:0.3px;right:1013px;text-align:right;">-</div>
<div class="t" style="top:593.20px;font-size:9.5px;line-height:10.92px;color:#000;font-weight:normal;letter-spacing:0.3px;right:941px;text-align:right;">-</div>
<div class="t" style="top:593.20px;font-size:9.5px;line-height:10.92px;color:#000;font-weight:normal;letter-spacing:0.3px;right:869px;text-align:right;">-</div>
<div class="t" style="top:593.20px;font-size:9.5px;line-height:10.92px;color:#000;font-weight:normal;letter-spacing:0.3px;right:797px;text-align:right;">-</div>
<div class="t" style="top:593.20px;font-size:9.5px;line-height:10.92px;color:#000;font-weight:normal;letter-spacing:0.3px;right:725px;text-align:right;">-</div>
<div class="t" style="top:593.20px;font-size:9.5px;line-height:10.92px;color:#000;font-weight:normal;letter-spacing:0.3px;right:653px;text-align:right;">-</div>
<div class="t" style="top:593.20px;font-size:9.5px;line-height:10.92px;color:#000;font-weight:normal;letter-spacing:0.3px;right:581px;text-align:right;">-</div>
<div class="t" style="top:608.20px;font-size:9.5px;line-height:10.92px;color:#ff0000;font-weight:normal;letter-spacing:0.3px;font-style:italic;left:622px;">Inflation % in table above is for first 10 years including Construction. From year 11 onwards the inflation %  is assumed equal to that of year 10.</div>
<div class="t" style="top:623.20px;font-size:9.5px;line-height:10.92px;color:#000;font-weight:bold;left:100px;">5.02</div>
<div class="t" style="top:623.20px;font-size:9.5px;line-height:10.92px;color:#000;font-weight:bold;left:126px;">Indexation Start Date</div>
<div style="left:452px;top:634px;width:72px;height:151px;background:#cfcfcf;"></div>
<div style="left:453px;top:635px;width:70px;height:14px;background:#ffff99;"></div>
<div style="left:453px;top:650px;width:70px;height:14px;background:#ffff99;"></div>
<div style="left:453px;top:665px;width:70px;height:14px;background:#ffff99;"></div>
<div style="left:453px;top:680px;width:70px;height:14px;background:#ffff99;"></div>
<div style="left:453px;top:695px;width:70px;height:14px;background:#ffff99;"></div>
<div style="left:453px;top:710px;width:70px;height:14px;background:#ffff99;"></div>
<div style="left:453px;top:725px;width:70px;height:14px;background:#ffff99;"></div>
<div style="left:453px;top:740px;width:70px;height:14px;background:#ffff99;"></div>
<div style="left:453px;top:755px;width:70px;height:14px;background:#ffff99;"></div>
<div style="left:453px;top:770px;width:70px;height:14px;background:#ffff99;"></div>
<div class="t" style="top:638.20px;font-size:9.5px;line-height:10.92px;color:#000;font-weight:bold;right:1759px;text-align:right;">1</div>
<div class="t" style="top:638.20px;font-size:9.5px;line-height:10.92px;color:#000;font-weight:normal;letter-spacing:0.3px;left:164px;">Flat</div>
<div class="t" style="top:638.20px;font-size:9.5px;line-height:10.92px;color:#000;font-weight:normal;letter-spacing:0.3px;right:1398px;text-align:right;">1-Jan-23</div>
<div class="t" style="top:638.20px;font-size:9.5px;line-height:10.92px;color:#808080;font-weight:normal;letter-spacing:0.3px;left:271.5px;width:600px;text-align:center;">Date</div>
<div class="t" style="top:653.20px;font-size:9.5px;line-height:10.92px;color:#000;font-weight:bold;right:1759px;text-align:right;">2</div>
<div class="t" style="top:653.20px;font-size:9.5px;line-height:10.92px;color:#000;font-weight:normal;letter-spacing:0.3px;left:164px;">High Case</div>
<div class="t" style="top:653.20px;font-size:9.5px;line-height:10.92px;color:#000;font-weight:normal;letter-spacing:0.3px;right:1398px;text-align:right;">1-Jan-23</div>
<div class="t" style="top:653.20px;font-size:9.5px;line-height:10.92px;color:#808080;font-weight:normal;letter-spacing:0.3px;left:271.5px;width:600px;text-align:center;">Date</div>
<div class="t" style="top:668.20px;font-size:9.5px;line-height:10.92px;color:#000;font-weight:bold;right:1759px;text-align:right;">3</div>
<div class="t" style="top:668.20px;font-size:9.5px;line-height:10.92px;color:#000;font-weight:normal;letter-spacing:0.3px;left:164px;">Base Case</div>
<div class="t" style="top:668.20px;font-size:9.5px;line-height:10.92px;color:#000;font-weight:normal;letter-spacing:0.3px;right:1398px;text-align:right;">1-Jan-23</div>
<div class="t" style="top:668.20px;font-size:9.5px;line-height:10.92px;color:#808080;font-weight:normal;letter-spacing:0.3px;left:271.5px;width:600px;text-align:center;">Date</div>
<div class="t" style="top:683.20px;font-size:9.5px;line-height:10.92px;color:#000;font-weight:bold;right:1759px;text-align:right;">4</div>
<div class="t" style="top:683.20px;font-size:9.5px;line-height:10.92px;color:#000;font-weight:normal;letter-spacing:0.3px;left:164px;">Low Case</div>
<div class="t" style="top:683.20px;font-size:9.5px;line-height:10.92px;color:#000;font-weight:normal;letter-spacing:0.3px;right:1398px;text-align:right;">1-Jan-23</div>
<div class="t" style="top:683.20px;font-size:9.5px;line-height:10.92px;color:#808080;font-weight:normal;letter-spacing:0.3px;left:271.5px;width:600px;text-align:center;">Date</div>
<div class="t" style="top:698.20px;font-size:9.5px;line-height:10.92px;color:#000;font-weight:bold;right:1759px;text-align:right;">5</div>
<div class="t" style="top:698.20px;font-size:9.5px;line-height:10.92px;color:#000;font-weight:normal;letter-spacing:0.3px;left:164px;">Merchant Price</div>
<div class="t" style="top:698.20px;font-size:9.5px;line-height:10.92px;color:#000;font-weight:normal;letter-spacing:0.3px;right:1398px;text-align:right;">1-Jan-23</div>
<div class="t" style="top:698.20px;font-size:9.5px;line-height:10.92px;color:#808080;font-weight:normal;letter-spacing:0.3px;left:271.5px;width:600px;text-align:center;">Date</div>
<div class="t" style="top:713.20px;font-size:9.5px;line-height:10.92px;color:#000;font-weight:bold;right:1759px;text-align:right;">6</div>
<div class="t" style="top:713.20px;font-size:9.5px;line-height:10.92px;color:#000;font-weight:normal;letter-spacing:0.3px;left:164px;">Case 2</div>
<div class="t" style="top:713.20px;font-size:9.5px;line-height:10.92px;color:#000;font-weight:normal;letter-spacing:0.3px;right:1398px;text-align:right;">1-Jan-23</div>
<div class="t" style="top:713.20px;font-size:9.5px;line-height:10.92px;color:#808080;font-weight:normal;letter-spacing:0.3px;left:271.5px;width:600px;text-align:center;">Date</div>
<div class="t" style="top:728.20px;font-size:9.5px;line-height:10.92px;color:#000;font-weight:bold;right:1759px;text-align:right;">7</div>
<div class="t" style="top:728.20px;font-size:9.5px;line-height:10.92px;color:#000;font-weight:normal;letter-spacing:0.3px;left:164px;">Case 3</div>
<div class="t" style="top:728.20px;font-size:9.5px;line-height:10.92px;color:#000;font-weight:normal;letter-spacing:0.3px;right:1398px;text-align:right;">1-Jan-23</div>
<div class="t" style="top:728.20px;font-size:9.5px;line-height:10.92px;color:#808080;font-weight:normal;letter-spacing:0.3px;left:271.5px;width:600px;text-align:center;">Date</div>
<div class="t" style="top:743.20px;font-size:9.5px;line-height:10.92px;color:#000;font-weight:bold;right:1759px;text-align:right;">8</div>
<div class="t" style="top:743.20px;font-size:9.5px;line-height:10.92px;color:#000;font-weight:normal;letter-spacing:0.3px;left:164px;">Case 4</div>
<div class="t" style="top:743.20px;font-size:9.5px;line-height:10.92px;color:#000;font-weight:normal;letter-spacing:0.3px;right:1398px;text-align:right;">1-Jan-23</div>
<div class="t" style="top:743.20px;font-size:9.5px;line-height:10.92px;color:#808080;font-weight:normal;letter-spacing:0.3px;left:271.5px;width:600px;text-align:center;">Date</div>
<div class="t" style="top:758.20px;font-size:9.5px;line-height:10.92px;color:#000;font-weight:bold;right:1759px;text-align:right;">9</div>
<div class="t" style="top:758.20px;font-size:9.5px;line-height:10.92px;color:#000;font-weight:normal;letter-spacing:0.3px;left:164px;">Case 5</div>
<div class="t" style="top:758.20px;font-size:9.5px;line-height:10.92px;color:#000;font-weight:normal;letter-spacing:0.3px;right:1398px;text-align:right;">1-Jan-23</div>
<div class="t" style="top:758.20px;font-size:9.5px;line-height:10.92px;color:#808080;font-weight:normal;letter-spacing:0.3px;left:271.5px;width:600px;text-align:center;">Date</div>
<div class="t" style="top:773.20px;font-size:9.5px;line-height:10.92px;color:#000;font-weight:bold;right:1759px;text-align:right;">10</div>
<div class="t" style="top:773.20px;font-size:9.5px;line-height:10.92px;color:#000;font-weight:normal;letter-spacing:0.3px;left:164px;">Case 6</div>
<div class="t" style="top:773.20px;font-size:9.5px;line-height:10.92px;color:#000;font-weight:normal;letter-spacing:0.3px;right:1398px;text-align:right;">1-Jan-23</div>
<div class="t" style="top:773.20px;font-size:9.5px;line-height:10.92px;color:#808080;font-weight:normal;letter-spacing:0.3px;left:271.5px;width:600px;text-align:center;">Date</div>
<div style="left:21px;top:799px;width:1875px;height:17px;background:#44546a;"></div>
<div class="t" style="top:803.75px;font-size:10px;line-height:11.49px;color:#fff;font-weight:bold;left:49px;">6</div>
<div class="t" style="top:803.75px;font-size:10px;line-height:11.49px;color:#fff;font-weight:bold;left:63px;">Capital Expenditure and Setup Cost</div>
<div class="t" style="top:834.20px;font-size:9.5px;line-height:10.92px;color:#000;font-weight:bold;left:100px;">6.01</div>
<div class="t" style="top:834.20px;font-size:9.5px;line-height:10.92px;color:#000;font-weight:bold;left:126px;">Charge Cost</div>
<div class="t" style="top:849.20px;font-size:9.5px;line-height:10.92px;color:#000;font-weight:bold;right:1759px;text-align:right;">1</div>
<div class="t" style="top:849.20px;font-size:9.5px;line-height:10.92px;color:#000;font-weight:normal;letter-spacing:0.3px;left:164px;">CCS</div>
<div class="t" style="top:849.20px;font-size:9.5px;line-height:10.92px;color:#000;font-weight:normal;letter-spacing:0.5px;right:1400px;text-align:right;">20.71</div>
<div class="t" style="top:849.20px;font-size:9.5px;line-height:10.92px;color:#808080;font-weight:normal;letter-spacing:0.3px;left:271.5px;width:600px;text-align:center;">US$ &#x27;000</div>
<div class="t" style="top:864.20px;font-size:9.5px;line-height:10.92px;color:#000;font-weight:bold;right:1759px;text-align:right;">2</div>
<div class="t" style="top:864.20px;font-size:9.5px;line-height:10.92px;color:#000;font-weight:normal;letter-spacing:0.3px;left:164px;">CHADeMO</div>
<div class="t" style="top:864.20px;font-size:9.5px;line-height:10.92px;color:#000;font-weight:normal;letter-spacing:0.5px;right:1400px;text-align:right;">20.71</div>
<div class="t" style="top:864.20px;font-size:9.5px;line-height:10.92px;color:#808080;font-weight:normal;letter-spacing:0.3px;left:271.5px;width:600px;text-align:center;">US$ &#x27;000</div>
<div class="t" style="top:879.20px;font-size:9.5px;line-height:10.92px;color:#000;font-weight:bold;right:1759px;text-align:right;">3</div>
<div class="t" style="top:879.20px;font-size:9.5px;line-height:10.92px;color:#000;font-weight:normal;letter-spacing:0.3px;left:164px;">Type 2 AC</div>
<div class="t" style="top:879.20px;font-size:9.5px;line-height:10.92px;color:#000;font-weight:normal;letter-spacing:0.5px;right:1400px;text-align:right;">1.79</div>
<div class="t" style="top:879.20px;font-size:9.5px;line-height:10.92px;color:#808080;font-weight:normal;letter-spacing:0.3px;left:271.5px;width:600px;text-align:center;">US$ &#x27;000</div>
<div class="t" style="top:894.20px;font-size:9.5px;line-height:10.92px;color:#000;font-weight:bold;right:1759px;text-align:right;">4</div>
<div class="t" style="top:894.20px;font-size:9.5px;line-height:10.92px;color:#000;font-weight:normal;letter-spacing:0.3px;left:164px;">Bharat DC - 001</div>
<div class="t" style="top:894.20px;font-size:9.5px;line-height:10.92px;color:#000;font-weight:normal;letter-spacing:0.5px;right:1400px;text-align:right;">3.43</div>
<div class="t" style="top:894.20px;font-size:9.5px;line-height:10.92px;color:#808080;font-weight:normal;letter-spacing:0.3px;left:271.5px;width:600px;text-align:center;">US$ &#x27;000</div>
<div class="t" style="top:909.20px;font-size:9.5px;line-height:10.92px;color:#000;font-weight:bold;right:1759px;text-align:right;">5</div>
<div class="t" style="top:909.20px;font-size:9.5px;line-height:10.92px;color:#000;font-weight:normal;letter-spacing:0.3px;left:164px;">Bharat AC - 001</div>
<div class="t" style="top:909.20px;font-size:9.5px;line-height:10.92px;color:#000;font-weight:normal;letter-spacing:0.5px;right:1400px;text-align:right;">1.00</div>
<div class="t" style="top:909.20px;font-size:9.5px;line-height:10.92px;color:#808080;font-weight:normal;letter-spacing:0.3px;left:271.5px;width:600px;text-align:center;">US$ &#x27;000</div>
<div class="t" style="top:924.20px;font-size:9.5px;line-height:10.92px;color:#000;font-weight:bold;right:1759px;text-align:right;">6</div>
<div class="t" style="top:924.20px;font-size:9.5px;line-height:10.92px;color:#000;font-weight:normal;letter-spacing:0.3px;left:164px;">[Spare]</div>
<div class="t" style="top:924.20px;font-size:9.5px;line-height:10.92px;color:#808080;font-weight:normal;letter-spacing:0.3px;left:271.5px;width:600px;text-align:center;">US$ &#x27;000</div>
<div style="left:20px;top:198px;width:1876px;height:1px;background:#a0a0a0;"></div>
<div style="left:619px;top:63px;width:1px;height:864px;background:#a0a0a0;"></div>
<div style="left:1897px;top:48px;width:21px;height:880px;background:#e6e6e6;"></div>
<div style="left:0px;top:928px;width:1918px;height:52px;background:#e6e6e6;"></div>
<div style="left:1896px;top:62px;width:1px;height:866px;background:#a6a6a6;"></div>
<div style="left:0px;top:927px;width:1897px;height:1px;background:#a6a6a6;"></div>
<div style="left:1900px;top:64px;width:14px;height:848px;background:#dadada;"></div>
<div style="left:1900px;top:51px;width:14px;height:14px;background:#fff;border:1px solid #c6c6c6;"></div>
<svg style="position:absolute;left:1903px;top:55px" width="9" height="5"><path d="M0 5H9L4.5 0Z" fill="#7a7a7a"/></svg>
<div style="left:1900px;top:117px;width:14px;height:729px;background:#fff;border:1px solid #c6c6c6;"></div>
<div style="left:1900px;top:912px;width:14px;height:15px;background:#fff;border:1px solid #c6c6c6;"></div>
<svg style="position:absolute;left:1903px;top:917px" width="9" height="5"><path d="M0 0H9L4.5 5Z" fill="#7a7a7a"/></svg>
<svg style="position:absolute;left:25px;top:937px" width="5" height="8"><path d="M4 0V7L0 3.5Z" fill="#c0c0c0"/></svg>
<svg style="position:absolute;left:54px;top:937px" width="5" height="8"><path d="M0 0V7L4.5 3.5Z" fill="#0e6b30"/></svg>
<div style="left:101px;top:930px;width:53px;height:22px;background:#0070c0;"></div>
<div class="t" style="top:933.69px;font-size:12.5px;line-height:14.36px;color:#fff;font-weight:normal;left:-172.5px;width:600px;text-align:center;-webkit-text-stroke:0;">Index</div>
<div style="left:159px;top:930px;width:72px;height:22px;background:#0070c0;"></div>
<div class="t" style="top:933.69px;font-size:12.5px;line-height:14.36px;color:#fff;font-weight:normal;left:-105.0px;width:600px;text-align:center;-webkit-text-stroke:0;">Read Me</div>
<div style="left:236px;top:930px;width:86px;height:22px;background:#00b050;"></div>
<div class="t" style="top:933.69px;font-size:12.5px;line-height:14.36px;color:#000;font-weight:normal;left:-21.0px;width:600px;text-align:center;-webkit-text-stroke:0;">Dashboard</div>
<div style="left:327px;top:930px;width:82px;height:22px;background:#00b050;"></div>
<div class="t" style="top:933.69px;font-size:12.5px;line-height:14.36px;color:#000;font-weight:normal;left:68.0px;width:600px;text-align:center;-webkit-text-stroke:0;">FS_Annual</div>
<div style="left:414px;top:930px;width:90px;height:22px;background:#00b050;"></div>
<div class="t" style="top:933.69px;font-size:12.5px;line-height:14.36px;color:#000;font-weight:normal;left:159.0px;width:600px;text-align:center;-webkit-text-stroke:0;">FS_Monthly</div>
<div style="left:509px;top:930px;width:71px;height:22px;background:#00b050;"></div>
<div class="t" style="top:933.69px;font-size:12.5px;line-height:14.36px;color:#000;font-weight:normal;left:244.5px;width:600px;text-align:center;-webkit-text-stroke:0;">NPV-IRR</div>
<div style="left:585px;top:930px;width:141px;height:22px;background:#00b050;"></div>
<div class="t" style="top:933.69px;font-size:12.5px;line-height:14.36px;color:#000;font-weight:normal;left:355.5px;width:600px;text-align:center;-webkit-text-stroke:0;">Valuation Summary</div>
<div style="left:731px;top:930px;width:97px;height:22px;background:#00b050;"></div>
<div class="t" style="top:933.69px;font-size:12.5px;line-height:14.36px;color:#000;font-weight:normal;left:479.5px;width:600px;text-align:center;-webkit-text-stroke:0;">Exit Strategy</div>
<div style="left:937px;top:930px;width:98px;height:22px;background:#000;"></div>
<div class="t" style="top:933.69px;font-size:12.5px;line-height:14.36px;color:#fff;font-weight:normal;left:686.0px;width:600px;text-align:center;-webkit-text-stroke:0;">Construction</div>
<div style="left:1040px;top:930px;width:87px;height:22px;background:#000;"></div>
<div class="t" style="top:933.69px;font-size:12.5px;line-height:14.36px;color:#fff;font-weight:normal;left:783.5px;width:600px;text-align:center;-webkit-text-stroke:0;">Operations</div>
<div style="left:98px;top:931px;width:1px;height:20px;background:#a8a8a8;"></div>
<div style="left:156px;top:931px;width:1px;height:20px;background:#a8a8a8;"></div>
<div style="left:233px;top:931px;width:1px;height:20px;background:#a8a8a8;"></div>
<div style="left:324px;top:931px;width:1px;height:20px;background:#a8a8a8;"></div>
<div style="left:411px;top:931px;width:1px;height:20px;background:#a8a8a8;"></div>
<div style="left:506px;top:931px;width:1px;height:20px;background:#a8a8a8;"></div>
<div style="left:582px;top:931px;width:1px;height:20px;background:#a8a8a8;"></div>
<div style="left:728px;top:931px;width:1px;height:20px;background:#a8a8a8;"></div>
<div style="left:1037px;top:931px;width:1px;height:20px;background:#a8a8a8;"></div>
<div style="left:1129px;top:931px;width:1px;height:20px;background:#a8a8a8;"></div>
<div style="left:1132px;top:930px;width:21px;height:22px;background:#000;overflow:hidden;"></div>
<div style="left:1132px;top:930px;width:21px;height:22px;overflow:hidden;"><div class="t" style="left:11px;top:3.2px;font-size:12.5px;line-height:14px;color:#fff;-webkit-text-stroke:0;">Fu</div></div>
<div class="t" style="top:932.69px;font-size:12.5px;line-height:14.36px;color:#217346;font-weight:bold;left:867px;width:600px;text-align:center;">...</div>
<div style="left:830px;top:927px;width:105px;height:25px;background:linear-gradient(#ffffff,#fdf9cf);border:1px solid #b0b0b0;border-bottom:none;"></div>
<div style="left:830px;top:950px;width:105px;height:2px;background:#217346;"></div>
<div class="t" style="top:933.69px;font-size:12.5px;line-height:14.36px;color:#217346;font-weight:bold;left:582px;width:600px;text-align:center;">Assumptions</div>
<svg style="position:absolute;left:1186px;top:933px" width="16" height="16"><circle cx="8" cy="8" r="7.2" stroke="#777" stroke-width="1.1" fill="none"/><path d="M8 4V12M4 8H12" stroke="#666" stroke-width="1.6"/></svg>
<div style="left:1222px;top:936px;width:2px;height:2px;background:#aaa;"></div>
<div style="left:1222px;top:940px;width:2px;height:2px;background:#aaa;"></div>
<div style="left:1222px;top:944px;width:2px;height:2px;background:#aaa;"></div>
<div style="left:1239px;top:934px;width:642px;height:15px;background:#dadada;"></div>
<div style="left:1239px;top:934px;width:15px;height:15px;background:#fff;border:1px solid #c6c6c6;"></div>
<svg style="position:absolute;left:1243px;top:937px" width="5" height="9"><path d="M5 0V9L0 4.5Z" fill="#555"/></svg>
<div style="left:1253px;top:934px;width:336px;height:15px;background:#fff;border:1px solid #c6c6c6;"></div>
<div style="left:1880px;top:934px;width:15px;height:15px;background:#fff;border:1px solid #c6c6c6;"></div>
<svg style="position:absolute;left:1886px;top:937px" width="5" height="9"><path d="M0 0V9L5 4.5Z" fill="#555"/></svg>
<div style="left:0px;top:955px;width:1918px;height:22px;background:#f3f2f1;border-top:1px solid #d6d6d6;"></div>
<svg style="position:absolute;left:5px;top:959px" width="17" height="15"><rect x="1.5" y="1.5" width="13" height="11" fill="none" stroke="#3c3c3c"/><path d="M1.5 3.5H14.5M3.5 5.5H6M3.5 7.5H5.5M3.5 9.5H5.5" stroke="#3c3c3c" fill="none"/><circle cx="11" cy="9.5" r="3.6" fill="#f3f2f1" stroke="#3c3c3c" stroke-width="1.1"/><circle cx="11" cy="9.5" r="1.6" fill="#3c3c3c"/></svg>
<svg style="position:absolute;left:35px;top:957px" width="18" height="17"><path d="M7.5 4.6A5.6 5.6 0 1 0 9.2 15.2" stroke="#3c3c3c" fill="none" stroke-width="1.1"/><path d="M9.3 1.5V8.2M7.4 6.3L9.3 8.2L11.2 6.3M13.6 5.8V8.8M12.1 7.3H15.1M10.2 10.3L16.2 16.3M16.2 10.3L10.2 16.3" stroke="#3c3c3c" fill="none" stroke-width="1.1"/></svg>
<div class="t" style="top:959.04px;font-size:11px;line-height:12.64px;color:#444;font-weight:normal;letter-spacing:0.17px;left:56px;-webkit-text-stroke:0;">Accessibility: Investigate</div>
<div style="left:1624px;top:956px;width:40px;height:21px;background:#c8c6c4;"></div>
<svg style="position:absolute;left:1637px;top:959px" width="14" height="14"><path d="M0.6 0.6H12.6V12.6H0.6ZM4.6 0.6V12.6M8.6 0.6V12.6M0.6 4.6H12.6M0.6 8.6H12.6" stroke="#222" stroke-width="1.25" fill="none"/></svg>
<svg style="position:absolute;left:1677px;top:959px" width="15" height="14"><rect x="0.6" y="0.6" width="13" height="12" fill="none" stroke="#2a2a2a" stroke-width="1.2"/><rect x="3.6" y="2.6" width="7" height="8" fill="none" stroke="#2a2a2a" stroke-width="1.1"/><path d="M5 4.6H9M5 6.6H9M5 8.6H9" stroke="#2a2a2a" stroke-width="0.9"/></svg>
<svg style="position:absolute;left:1717px;top:959px" width="15" height="14"><rect x="0.6" y="0.6" width="13" height="12" fill="none" stroke="#2a2a2a" stroke-width="1.2"/><path d="M4.1 0.6V7.1M8 0.6V7.1M0.6 7.1H8" stroke="#2a2a2a" stroke-width="1.1" fill="none"/></svg>
<div style="left:1750px;top:965px;width:8px;height:1px;background:#444;"></div>
<div style="left:1763px;top:965px;width:100px;height:1px;background:#9a9a9a;"></div>
<div style="left:1798px;top:960px;width:5px;height:11px;background:#6a6a6a;"></div>
<div style="left:1813px;top:963px;width:1px;height:5px;background:#9a9a9a;"></div>
<div style="left:1868px;top:965px;width:8px;height:1px;background:#444;"></div>
<div style="left:1871px;top:961px;width:1px;height:9px;background:#444;"></div>
<div class="t" style="top:959.04px;font-size:11px;line-height:12.64px;color:#444;font-weight:normal;right:8px;text-align:right;-webkit-text-stroke:0;">75%</div>
<div style="left:0px;top:977px;width:1918px;height:3px;background:#1c1c1c;"></div>
<div style="left:46px;top:977px;width:344px;height:3px;background:#e8e8e8;"></div>
<div style="left:637px;top:977px;width:48px;height:3px;background:#454545;"></div>
</body></html>
